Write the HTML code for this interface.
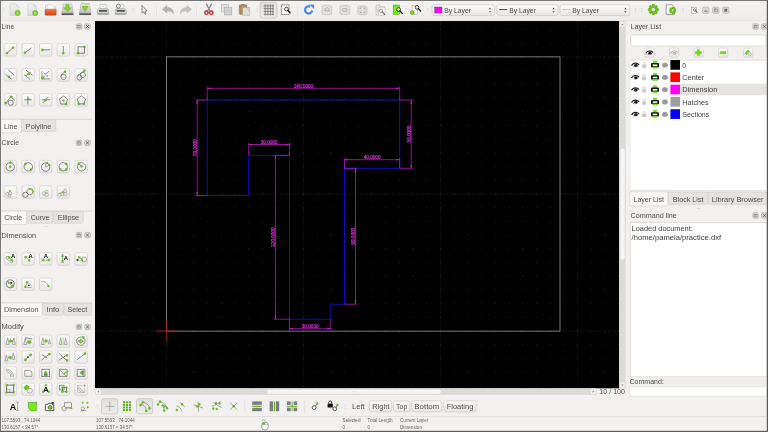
<!DOCTYPE html>
<html lang="en"><head><meta charset="utf-8"><title>LibreCAD - practice.dxf</title>
<style>html,body{margin:0;padding:0;background:#f2f1f0;overflow:hidden}svg{display:block}text{font-family:"Liberation Sans",sans-serif}</style>
</head><body>
<svg width="768" height="432" viewBox="0 0 768 432">
<filter id="soft" filterUnits="userSpaceOnUse" x="-10" y="-10" width="788" height="452"><feGaussianBlur stdDeviation="0.32"/></filter>
<g filter="url(#soft)">
<rect x="-6.00" y="-6.00" width="780.00" height="444.00" fill="#f2f1f0" />
<rect x="95.00" y="21.00" width="524.20" height="367.30" fill="#000" />
<clipPath id="cv"><rect x="95" y="21" width="524.2" height="367.3"/></clipPath>
<g clip-path="url(#cv)">
<path d="M97.65,29.60h0.9M97.65,43.30h0.9M97.65,57.00h0.9M97.65,70.70h0.9M97.65,84.40h0.9M97.65,98.10h0.9M97.65,111.80h0.9M97.65,125.50h0.9M97.65,139.20h0.9M97.65,152.90h0.9M97.65,166.60h0.9M97.65,180.30h0.9M97.65,194.00h0.9M97.65,207.70h0.9M97.65,221.40h0.9M97.65,235.10h0.9M97.65,248.80h0.9M97.65,262.50h0.9M97.65,276.20h0.9M97.65,289.90h0.9M97.65,303.60h0.9M97.65,317.30h0.9M97.65,331.00h0.9M97.65,344.70h0.9M97.65,358.40h0.9M97.65,372.10h0.9M97.65,385.80h0.9M111.35,29.60h0.9M111.35,43.30h0.9M111.35,57.00h0.9M111.35,70.70h0.9M111.35,84.40h0.9M111.35,98.10h0.9M111.35,111.80h0.9M111.35,125.50h0.9M111.35,139.20h0.9M111.35,152.90h0.9M111.35,166.60h0.9M111.35,180.30h0.9M111.35,194.00h0.9M111.35,207.70h0.9M111.35,221.40h0.9M111.35,235.10h0.9M111.35,248.80h0.9M111.35,262.50h0.9M111.35,276.20h0.9M111.35,289.90h0.9M111.35,303.60h0.9M111.35,317.30h0.9M111.35,331.00h0.9M111.35,344.70h0.9M111.35,358.40h0.9M111.35,372.10h0.9M111.35,385.80h0.9M125.05,29.60h0.9M125.05,43.30h0.9M125.05,57.00h0.9M125.05,70.70h0.9M125.05,84.40h0.9M125.05,98.10h0.9M125.05,111.80h0.9M125.05,125.50h0.9M125.05,139.20h0.9M125.05,152.90h0.9M125.05,166.60h0.9M125.05,180.30h0.9M125.05,194.00h0.9M125.05,207.70h0.9M125.05,221.40h0.9M125.05,235.10h0.9M125.05,248.80h0.9M125.05,262.50h0.9M125.05,276.20h0.9M125.05,289.90h0.9M125.05,303.60h0.9M125.05,317.30h0.9M125.05,331.00h0.9M125.05,344.70h0.9M125.05,358.40h0.9M125.05,372.10h0.9M125.05,385.80h0.9M138.75,29.60h0.9M138.75,43.30h0.9M138.75,57.00h0.9M138.75,70.70h0.9M138.75,84.40h0.9M138.75,98.10h0.9M138.75,111.80h0.9M138.75,125.50h0.9M138.75,139.20h0.9M138.75,152.90h0.9M138.75,166.60h0.9M138.75,180.30h0.9M138.75,194.00h0.9M138.75,207.70h0.9M138.75,221.40h0.9M138.75,235.10h0.9M138.75,248.80h0.9M138.75,262.50h0.9M138.75,276.20h0.9M138.75,289.90h0.9M138.75,303.60h0.9M138.75,317.30h0.9M138.75,331.00h0.9M138.75,344.70h0.9M138.75,358.40h0.9M138.75,372.10h0.9M138.75,385.80h0.9M152.45,29.60h0.9M152.45,43.30h0.9M152.45,57.00h0.9M152.45,70.70h0.9M152.45,84.40h0.9M152.45,98.10h0.9M152.45,111.80h0.9M152.45,125.50h0.9M152.45,139.20h0.9M152.45,152.90h0.9M152.45,166.60h0.9M152.45,180.30h0.9M152.45,194.00h0.9M152.45,207.70h0.9M152.45,221.40h0.9M152.45,235.10h0.9M152.45,248.80h0.9M152.45,262.50h0.9M152.45,276.20h0.9M152.45,289.90h0.9M152.45,303.60h0.9M152.45,317.30h0.9M152.45,331.00h0.9M152.45,344.70h0.9M152.45,358.40h0.9M152.45,372.10h0.9M152.45,385.80h0.9M166.15,29.60h0.9M166.15,43.30h0.9M166.15,57.00h0.9M166.15,70.70h0.9M166.15,84.40h0.9M166.15,98.10h0.9M166.15,111.80h0.9M166.15,125.50h0.9M166.15,139.20h0.9M166.15,152.90h0.9M166.15,166.60h0.9M166.15,180.30h0.9M166.15,194.00h0.9M166.15,207.70h0.9M166.15,221.40h0.9M166.15,235.10h0.9M166.15,248.80h0.9M166.15,262.50h0.9M166.15,276.20h0.9M166.15,289.90h0.9M166.15,303.60h0.9M166.15,317.30h0.9M166.15,331.00h0.9M166.15,344.70h0.9M166.15,358.40h0.9M166.15,372.10h0.9M166.15,385.80h0.9M179.85,29.60h0.9M179.85,43.30h0.9M179.85,57.00h0.9M179.85,70.70h0.9M179.85,84.40h0.9M179.85,98.10h0.9M179.85,111.80h0.9M179.85,125.50h0.9M179.85,139.20h0.9M179.85,152.90h0.9M179.85,166.60h0.9M179.85,180.30h0.9M179.85,194.00h0.9M179.85,207.70h0.9M179.85,221.40h0.9M179.85,235.10h0.9M179.85,248.80h0.9M179.85,262.50h0.9M179.85,276.20h0.9M179.85,289.90h0.9M179.85,303.60h0.9M179.85,317.30h0.9M179.85,331.00h0.9M179.85,344.70h0.9M179.85,358.40h0.9M179.85,372.10h0.9M179.85,385.80h0.9M193.55,29.60h0.9M193.55,43.30h0.9M193.55,57.00h0.9M193.55,70.70h0.9M193.55,84.40h0.9M193.55,98.10h0.9M193.55,111.80h0.9M193.55,125.50h0.9M193.55,139.20h0.9M193.55,152.90h0.9M193.55,166.60h0.9M193.55,180.30h0.9M193.55,194.00h0.9M193.55,207.70h0.9M193.55,221.40h0.9M193.55,235.10h0.9M193.55,248.80h0.9M193.55,262.50h0.9M193.55,276.20h0.9M193.55,289.90h0.9M193.55,303.60h0.9M193.55,317.30h0.9M193.55,331.00h0.9M193.55,344.70h0.9M193.55,358.40h0.9M193.55,372.10h0.9M193.55,385.80h0.9M207.25,29.60h0.9M207.25,43.30h0.9M207.25,57.00h0.9M207.25,70.70h0.9M207.25,84.40h0.9M207.25,98.10h0.9M207.25,111.80h0.9M207.25,125.50h0.9M207.25,139.20h0.9M207.25,152.90h0.9M207.25,166.60h0.9M207.25,180.30h0.9M207.25,194.00h0.9M207.25,207.70h0.9M207.25,221.40h0.9M207.25,235.10h0.9M207.25,248.80h0.9M207.25,262.50h0.9M207.25,276.20h0.9M207.25,289.90h0.9M207.25,303.60h0.9M207.25,317.30h0.9M207.25,331.00h0.9M207.25,344.70h0.9M207.25,358.40h0.9M207.25,372.10h0.9M207.25,385.80h0.9M220.95,29.60h0.9M220.95,43.30h0.9M220.95,57.00h0.9M220.95,70.70h0.9M220.95,84.40h0.9M220.95,98.10h0.9M220.95,111.80h0.9M220.95,125.50h0.9M220.95,139.20h0.9M220.95,152.90h0.9M220.95,166.60h0.9M220.95,180.30h0.9M220.95,194.00h0.9M220.95,207.70h0.9M220.95,221.40h0.9M220.95,235.10h0.9M220.95,248.80h0.9M220.95,262.50h0.9M220.95,276.20h0.9M220.95,289.90h0.9M220.95,303.60h0.9M220.95,317.30h0.9M220.95,331.00h0.9M220.95,344.70h0.9M220.95,358.40h0.9M220.95,372.10h0.9M220.95,385.80h0.9M234.65,29.60h0.9M234.65,43.30h0.9M234.65,57.00h0.9M234.65,70.70h0.9M234.65,84.40h0.9M234.65,98.10h0.9M234.65,111.80h0.9M234.65,125.50h0.9M234.65,139.20h0.9M234.65,152.90h0.9M234.65,166.60h0.9M234.65,180.30h0.9M234.65,194.00h0.9M234.65,207.70h0.9M234.65,221.40h0.9M234.65,235.10h0.9M234.65,248.80h0.9M234.65,262.50h0.9M234.65,276.20h0.9M234.65,289.90h0.9M234.65,303.60h0.9M234.65,317.30h0.9M234.65,331.00h0.9M234.65,344.70h0.9M234.65,358.40h0.9M234.65,372.10h0.9M234.65,385.80h0.9M248.35,29.60h0.9M248.35,43.30h0.9M248.35,57.00h0.9M248.35,70.70h0.9M248.35,84.40h0.9M248.35,98.10h0.9M248.35,111.80h0.9M248.35,125.50h0.9M248.35,139.20h0.9M248.35,152.90h0.9M248.35,166.60h0.9M248.35,180.30h0.9M248.35,194.00h0.9M248.35,207.70h0.9M248.35,221.40h0.9M248.35,235.10h0.9M248.35,248.80h0.9M248.35,262.50h0.9M248.35,276.20h0.9M248.35,289.90h0.9M248.35,303.60h0.9M248.35,317.30h0.9M248.35,331.00h0.9M248.35,344.70h0.9M248.35,358.40h0.9M248.35,372.10h0.9M248.35,385.80h0.9M262.05,29.60h0.9M262.05,43.30h0.9M262.05,57.00h0.9M262.05,70.70h0.9M262.05,84.40h0.9M262.05,98.10h0.9M262.05,111.80h0.9M262.05,125.50h0.9M262.05,139.20h0.9M262.05,152.90h0.9M262.05,166.60h0.9M262.05,180.30h0.9M262.05,194.00h0.9M262.05,207.70h0.9M262.05,221.40h0.9M262.05,235.10h0.9M262.05,248.80h0.9M262.05,262.50h0.9M262.05,276.20h0.9M262.05,289.90h0.9M262.05,303.60h0.9M262.05,317.30h0.9M262.05,331.00h0.9M262.05,344.70h0.9M262.05,358.40h0.9M262.05,372.10h0.9M262.05,385.80h0.9M275.75,29.60h0.9M275.75,43.30h0.9M275.75,57.00h0.9M275.75,70.70h0.9M275.75,84.40h0.9M275.75,98.10h0.9M275.75,111.80h0.9M275.75,125.50h0.9M275.75,139.20h0.9M275.75,152.90h0.9M275.75,166.60h0.9M275.75,180.30h0.9M275.75,194.00h0.9M275.75,207.70h0.9M275.75,221.40h0.9M275.75,235.10h0.9M275.75,248.80h0.9M275.75,262.50h0.9M275.75,276.20h0.9M275.75,289.90h0.9M275.75,303.60h0.9M275.75,317.30h0.9M275.75,331.00h0.9M275.75,344.70h0.9M275.75,358.40h0.9M275.75,372.10h0.9M275.75,385.80h0.9M289.45,29.60h0.9M289.45,43.30h0.9M289.45,57.00h0.9M289.45,70.70h0.9M289.45,84.40h0.9M289.45,98.10h0.9M289.45,111.80h0.9M289.45,125.50h0.9M289.45,139.20h0.9M289.45,152.90h0.9M289.45,166.60h0.9M289.45,180.30h0.9M289.45,194.00h0.9M289.45,207.70h0.9M289.45,221.40h0.9M289.45,235.10h0.9M289.45,248.80h0.9M289.45,262.50h0.9M289.45,276.20h0.9M289.45,289.90h0.9M289.45,303.60h0.9M289.45,317.30h0.9M289.45,331.00h0.9M289.45,344.70h0.9M289.45,358.40h0.9M289.45,372.10h0.9M289.45,385.80h0.9M303.15,29.60h0.9M303.15,43.30h0.9M303.15,57.00h0.9M303.15,70.70h0.9M303.15,84.40h0.9M303.15,98.10h0.9M303.15,111.80h0.9M303.15,125.50h0.9M303.15,139.20h0.9M303.15,152.90h0.9M303.15,166.60h0.9M303.15,180.30h0.9M303.15,194.00h0.9M303.15,207.70h0.9M303.15,221.40h0.9M303.15,235.10h0.9M303.15,248.80h0.9M303.15,262.50h0.9M303.15,276.20h0.9M303.15,289.90h0.9M303.15,303.60h0.9M303.15,317.30h0.9M303.15,331.00h0.9M303.15,344.70h0.9M303.15,358.40h0.9M303.15,372.10h0.9M303.15,385.80h0.9M316.85,29.60h0.9M316.85,43.30h0.9M316.85,57.00h0.9M316.85,70.70h0.9M316.85,84.40h0.9M316.85,98.10h0.9M316.85,111.80h0.9M316.85,125.50h0.9M316.85,139.20h0.9M316.85,152.90h0.9M316.85,166.60h0.9M316.85,180.30h0.9M316.85,194.00h0.9M316.85,207.70h0.9M316.85,221.40h0.9M316.85,235.10h0.9M316.85,248.80h0.9M316.85,262.50h0.9M316.85,276.20h0.9M316.85,289.90h0.9M316.85,303.60h0.9M316.85,317.30h0.9M316.85,331.00h0.9M316.85,344.70h0.9M316.85,358.40h0.9M316.85,372.10h0.9M316.85,385.80h0.9M330.55,29.60h0.9M330.55,43.30h0.9M330.55,57.00h0.9M330.55,70.70h0.9M330.55,84.40h0.9M330.55,98.10h0.9M330.55,111.80h0.9M330.55,125.50h0.9M330.55,139.20h0.9M330.55,152.90h0.9M330.55,166.60h0.9M330.55,180.30h0.9M330.55,194.00h0.9M330.55,207.70h0.9M330.55,221.40h0.9M330.55,235.10h0.9M330.55,248.80h0.9M330.55,262.50h0.9M330.55,276.20h0.9M330.55,289.90h0.9M330.55,303.60h0.9M330.55,317.30h0.9M330.55,331.00h0.9M330.55,344.70h0.9M330.55,358.40h0.9M330.55,372.10h0.9M330.55,385.80h0.9M344.25,29.60h0.9M344.25,43.30h0.9M344.25,57.00h0.9M344.25,70.70h0.9M344.25,84.40h0.9M344.25,98.10h0.9M344.25,111.80h0.9M344.25,125.50h0.9M344.25,139.20h0.9M344.25,152.90h0.9M344.25,166.60h0.9M344.25,180.30h0.9M344.25,194.00h0.9M344.25,207.70h0.9M344.25,221.40h0.9M344.25,235.10h0.9M344.25,248.80h0.9M344.25,262.50h0.9M344.25,276.20h0.9M344.25,289.90h0.9M344.25,303.60h0.9M344.25,317.30h0.9M344.25,331.00h0.9M344.25,344.70h0.9M344.25,358.40h0.9M344.25,372.10h0.9M344.25,385.80h0.9M357.95,29.60h0.9M357.95,43.30h0.9M357.95,57.00h0.9M357.95,70.70h0.9M357.95,84.40h0.9M357.95,98.10h0.9M357.95,111.80h0.9M357.95,125.50h0.9M357.95,139.20h0.9M357.95,152.90h0.9M357.95,166.60h0.9M357.95,180.30h0.9M357.95,194.00h0.9M357.95,207.70h0.9M357.95,221.40h0.9M357.95,235.10h0.9M357.95,248.80h0.9M357.95,262.50h0.9M357.95,276.20h0.9M357.95,289.90h0.9M357.95,303.60h0.9M357.95,317.30h0.9M357.95,331.00h0.9M357.95,344.70h0.9M357.95,358.40h0.9M357.95,372.10h0.9M357.95,385.80h0.9M371.65,29.60h0.9M371.65,43.30h0.9M371.65,57.00h0.9M371.65,70.70h0.9M371.65,84.40h0.9M371.65,98.10h0.9M371.65,111.80h0.9M371.65,125.50h0.9M371.65,139.20h0.9M371.65,152.90h0.9M371.65,166.60h0.9M371.65,180.30h0.9M371.65,194.00h0.9M371.65,207.70h0.9M371.65,221.40h0.9M371.65,235.10h0.9M371.65,248.80h0.9M371.65,262.50h0.9M371.65,276.20h0.9M371.65,289.90h0.9M371.65,303.60h0.9M371.65,317.30h0.9M371.65,331.00h0.9M371.65,344.70h0.9M371.65,358.40h0.9M371.65,372.10h0.9M371.65,385.80h0.9M385.35,29.60h0.9M385.35,43.30h0.9M385.35,57.00h0.9M385.35,70.70h0.9M385.35,84.40h0.9M385.35,98.10h0.9M385.35,111.80h0.9M385.35,125.50h0.9M385.35,139.20h0.9M385.35,152.90h0.9M385.35,166.60h0.9M385.35,180.30h0.9M385.35,194.00h0.9M385.35,207.70h0.9M385.35,221.40h0.9M385.35,235.10h0.9M385.35,248.80h0.9M385.35,262.50h0.9M385.35,276.20h0.9M385.35,289.90h0.9M385.35,303.60h0.9M385.35,317.30h0.9M385.35,331.00h0.9M385.35,344.70h0.9M385.35,358.40h0.9M385.35,372.10h0.9M385.35,385.80h0.9M399.05,29.60h0.9M399.05,43.30h0.9M399.05,57.00h0.9M399.05,70.70h0.9M399.05,84.40h0.9M399.05,98.10h0.9M399.05,111.80h0.9M399.05,125.50h0.9M399.05,139.20h0.9M399.05,152.90h0.9M399.05,166.60h0.9M399.05,180.30h0.9M399.05,194.00h0.9M399.05,207.70h0.9M399.05,221.40h0.9M399.05,235.10h0.9M399.05,248.80h0.9M399.05,262.50h0.9M399.05,276.20h0.9M399.05,289.90h0.9M399.05,303.60h0.9M399.05,317.30h0.9M399.05,331.00h0.9M399.05,344.70h0.9M399.05,358.40h0.9M399.05,372.10h0.9M399.05,385.80h0.9M412.75,29.60h0.9M412.75,43.30h0.9M412.75,57.00h0.9M412.75,70.70h0.9M412.75,84.40h0.9M412.75,98.10h0.9M412.75,111.80h0.9M412.75,125.50h0.9M412.75,139.20h0.9M412.75,152.90h0.9M412.75,166.60h0.9M412.75,180.30h0.9M412.75,194.00h0.9M412.75,207.70h0.9M412.75,221.40h0.9M412.75,235.10h0.9M412.75,248.80h0.9M412.75,262.50h0.9M412.75,276.20h0.9M412.75,289.90h0.9M412.75,303.60h0.9M412.75,317.30h0.9M412.75,331.00h0.9M412.75,344.70h0.9M412.75,358.40h0.9M412.75,372.10h0.9M412.75,385.80h0.9M426.45,29.60h0.9M426.45,43.30h0.9M426.45,57.00h0.9M426.45,70.70h0.9M426.45,84.40h0.9M426.45,98.10h0.9M426.45,111.80h0.9M426.45,125.50h0.9M426.45,139.20h0.9M426.45,152.90h0.9M426.45,166.60h0.9M426.45,180.30h0.9M426.45,194.00h0.9M426.45,207.70h0.9M426.45,221.40h0.9M426.45,235.10h0.9M426.45,248.80h0.9M426.45,262.50h0.9M426.45,276.20h0.9M426.45,289.90h0.9M426.45,303.60h0.9M426.45,317.30h0.9M426.45,331.00h0.9M426.45,344.70h0.9M426.45,358.40h0.9M426.45,372.10h0.9M426.45,385.80h0.9M440.15,29.60h0.9M440.15,43.30h0.9M440.15,57.00h0.9M440.15,70.70h0.9M440.15,84.40h0.9M440.15,98.10h0.9M440.15,111.80h0.9M440.15,125.50h0.9M440.15,139.20h0.9M440.15,152.90h0.9M440.15,166.60h0.9M440.15,180.30h0.9M440.15,194.00h0.9M440.15,207.70h0.9M440.15,221.40h0.9M440.15,235.10h0.9M440.15,248.80h0.9M440.15,262.50h0.9M440.15,276.20h0.9M440.15,289.90h0.9M440.15,303.60h0.9M440.15,317.30h0.9M440.15,331.00h0.9M440.15,344.70h0.9M440.15,358.40h0.9M440.15,372.10h0.9M440.15,385.80h0.9M453.85,29.60h0.9M453.85,43.30h0.9M453.85,57.00h0.9M453.85,70.70h0.9M453.85,84.40h0.9M453.85,98.10h0.9M453.85,111.80h0.9M453.85,125.50h0.9M453.85,139.20h0.9M453.85,152.90h0.9M453.85,166.60h0.9M453.85,180.30h0.9M453.85,194.00h0.9M453.85,207.70h0.9M453.85,221.40h0.9M453.85,235.10h0.9M453.85,248.80h0.9M453.85,262.50h0.9M453.85,276.20h0.9M453.85,289.90h0.9M453.85,303.60h0.9M453.85,317.30h0.9M453.85,331.00h0.9M453.85,344.70h0.9M453.85,358.40h0.9M453.85,372.10h0.9M453.85,385.80h0.9M467.55,29.60h0.9M467.55,43.30h0.9M467.55,57.00h0.9M467.55,70.70h0.9M467.55,84.40h0.9M467.55,98.10h0.9M467.55,111.80h0.9M467.55,125.50h0.9M467.55,139.20h0.9M467.55,152.90h0.9M467.55,166.60h0.9M467.55,180.30h0.9M467.55,194.00h0.9M467.55,207.70h0.9M467.55,221.40h0.9M467.55,235.10h0.9M467.55,248.80h0.9M467.55,262.50h0.9M467.55,276.20h0.9M467.55,289.90h0.9M467.55,303.60h0.9M467.55,317.30h0.9M467.55,331.00h0.9M467.55,344.70h0.9M467.55,358.40h0.9M467.55,372.10h0.9M467.55,385.80h0.9M481.25,29.60h0.9M481.25,43.30h0.9M481.25,57.00h0.9M481.25,70.70h0.9M481.25,84.40h0.9M481.25,98.10h0.9M481.25,111.80h0.9M481.25,125.50h0.9M481.25,139.20h0.9M481.25,152.90h0.9M481.25,166.60h0.9M481.25,180.30h0.9M481.25,194.00h0.9M481.25,207.70h0.9M481.25,221.40h0.9M481.25,235.10h0.9M481.25,248.80h0.9M481.25,262.50h0.9M481.25,276.20h0.9M481.25,289.90h0.9M481.25,303.60h0.9M481.25,317.30h0.9M481.25,331.00h0.9M481.25,344.70h0.9M481.25,358.40h0.9M481.25,372.10h0.9M481.25,385.80h0.9M494.95,29.60h0.9M494.95,43.30h0.9M494.95,57.00h0.9M494.95,70.70h0.9M494.95,84.40h0.9M494.95,98.10h0.9M494.95,111.80h0.9M494.95,125.50h0.9M494.95,139.20h0.9M494.95,152.90h0.9M494.95,166.60h0.9M494.95,180.30h0.9M494.95,194.00h0.9M494.95,207.70h0.9M494.95,221.40h0.9M494.95,235.10h0.9M494.95,248.80h0.9M494.95,262.50h0.9M494.95,276.20h0.9M494.95,289.90h0.9M494.95,303.60h0.9M494.95,317.30h0.9M494.95,331.00h0.9M494.95,344.70h0.9M494.95,358.40h0.9M494.95,372.10h0.9M494.95,385.80h0.9M508.65,29.60h0.9M508.65,43.30h0.9M508.65,57.00h0.9M508.65,70.70h0.9M508.65,84.40h0.9M508.65,98.10h0.9M508.65,111.80h0.9M508.65,125.50h0.9M508.65,139.20h0.9M508.65,152.90h0.9M508.65,166.60h0.9M508.65,180.30h0.9M508.65,194.00h0.9M508.65,207.70h0.9M508.65,221.40h0.9M508.65,235.10h0.9M508.65,248.80h0.9M508.65,262.50h0.9M508.65,276.20h0.9M508.65,289.90h0.9M508.65,303.60h0.9M508.65,317.30h0.9M508.65,331.00h0.9M508.65,344.70h0.9M508.65,358.40h0.9M508.65,372.10h0.9M508.65,385.80h0.9M522.35,29.60h0.9M522.35,43.30h0.9M522.35,57.00h0.9M522.35,70.70h0.9M522.35,84.40h0.9M522.35,98.10h0.9M522.35,111.80h0.9M522.35,125.50h0.9M522.35,139.20h0.9M522.35,152.90h0.9M522.35,166.60h0.9M522.35,180.30h0.9M522.35,194.00h0.9M522.35,207.70h0.9M522.35,221.40h0.9M522.35,235.10h0.9M522.35,248.80h0.9M522.35,262.50h0.9M522.35,276.20h0.9M522.35,289.90h0.9M522.35,303.60h0.9M522.35,317.30h0.9M522.35,331.00h0.9M522.35,344.70h0.9M522.35,358.40h0.9M522.35,372.10h0.9M522.35,385.80h0.9M536.05,29.60h0.9M536.05,43.30h0.9M536.05,57.00h0.9M536.05,70.70h0.9M536.05,84.40h0.9M536.05,98.10h0.9M536.05,111.80h0.9M536.05,125.50h0.9M536.05,139.20h0.9M536.05,152.90h0.9M536.05,166.60h0.9M536.05,180.30h0.9M536.05,194.00h0.9M536.05,207.70h0.9M536.05,221.40h0.9M536.05,235.10h0.9M536.05,248.80h0.9M536.05,262.50h0.9M536.05,276.20h0.9M536.05,289.90h0.9M536.05,303.60h0.9M536.05,317.30h0.9M536.05,331.00h0.9M536.05,344.70h0.9M536.05,358.40h0.9M536.05,372.10h0.9M536.05,385.80h0.9M549.75,29.60h0.9M549.75,43.30h0.9M549.75,57.00h0.9M549.75,70.70h0.9M549.75,84.40h0.9M549.75,98.10h0.9M549.75,111.80h0.9M549.75,125.50h0.9M549.75,139.20h0.9M549.75,152.90h0.9M549.75,166.60h0.9M549.75,180.30h0.9M549.75,194.00h0.9M549.75,207.70h0.9M549.75,221.40h0.9M549.75,235.10h0.9M549.75,248.80h0.9M549.75,262.50h0.9M549.75,276.20h0.9M549.75,289.90h0.9M549.75,303.60h0.9M549.75,317.30h0.9M549.75,331.00h0.9M549.75,344.70h0.9M549.75,358.40h0.9M549.75,372.10h0.9M549.75,385.80h0.9M563.45,29.60h0.9M563.45,43.30h0.9M563.45,57.00h0.9M563.45,70.70h0.9M563.45,84.40h0.9M563.45,98.10h0.9M563.45,111.80h0.9M563.45,125.50h0.9M563.45,139.20h0.9M563.45,152.90h0.9M563.45,166.60h0.9M563.45,180.30h0.9M563.45,194.00h0.9M563.45,207.70h0.9M563.45,221.40h0.9M563.45,235.10h0.9M563.45,248.80h0.9M563.45,262.50h0.9M563.45,276.20h0.9M563.45,289.90h0.9M563.45,303.60h0.9M563.45,317.30h0.9M563.45,331.00h0.9M563.45,344.70h0.9M563.45,358.40h0.9M563.45,372.10h0.9M563.45,385.80h0.9M577.15,29.60h0.9M577.15,43.30h0.9M577.15,57.00h0.9M577.15,70.70h0.9M577.15,84.40h0.9M577.15,98.10h0.9M577.15,111.80h0.9M577.15,125.50h0.9M577.15,139.20h0.9M577.15,152.90h0.9M577.15,166.60h0.9M577.15,180.30h0.9M577.15,194.00h0.9M577.15,207.70h0.9M577.15,221.40h0.9M577.15,235.10h0.9M577.15,248.80h0.9M577.15,262.50h0.9M577.15,276.20h0.9M577.15,289.90h0.9M577.15,303.60h0.9M577.15,317.30h0.9M577.15,331.00h0.9M577.15,344.70h0.9M577.15,358.40h0.9M577.15,372.10h0.9M577.15,385.80h0.9M590.85,29.60h0.9M590.85,43.30h0.9M590.85,57.00h0.9M590.85,70.70h0.9M590.85,84.40h0.9M590.85,98.10h0.9M590.85,111.80h0.9M590.85,125.50h0.9M590.85,139.20h0.9M590.85,152.90h0.9M590.85,166.60h0.9M590.85,180.30h0.9M590.85,194.00h0.9M590.85,207.70h0.9M590.85,221.40h0.9M590.85,235.10h0.9M590.85,248.80h0.9M590.85,262.50h0.9M590.85,276.20h0.9M590.85,289.90h0.9M590.85,303.60h0.9M590.85,317.30h0.9M590.85,331.00h0.9M590.85,344.70h0.9M590.85,358.40h0.9M590.85,372.10h0.9M590.85,385.80h0.9M604.55,29.60h0.9M604.55,43.30h0.9M604.55,57.00h0.9M604.55,70.70h0.9M604.55,84.40h0.9M604.55,98.10h0.9M604.55,111.80h0.9M604.55,125.50h0.9M604.55,139.20h0.9M604.55,152.90h0.9M604.55,166.60h0.9M604.55,180.30h0.9M604.55,194.00h0.9M604.55,207.70h0.9M604.55,221.40h0.9M604.55,235.10h0.9M604.55,248.80h0.9M604.55,262.50h0.9M604.55,276.20h0.9M604.55,289.90h0.9M604.55,303.60h0.9M604.55,317.30h0.9M604.55,331.00h0.9M604.55,344.70h0.9M604.55,358.40h0.9M604.55,372.10h0.9M604.55,385.80h0.9M618.25,29.60h0.9M618.25,43.30h0.9M618.25,57.00h0.9M618.25,70.70h0.9M618.25,84.40h0.9M618.25,98.10h0.9M618.25,111.80h0.9M618.25,125.50h0.9M618.25,139.20h0.9M618.25,152.90h0.9M618.25,166.60h0.9M618.25,180.30h0.9M618.25,194.00h0.9M618.25,207.70h0.9M618.25,221.40h0.9M618.25,235.10h0.9M618.25,248.80h0.9M618.25,262.50h0.9M618.25,276.20h0.9M618.25,289.90h0.9M618.25,303.60h0.9M618.25,317.30h0.9M618.25,331.00h0.9M618.25,344.70h0.9M618.25,358.40h0.9M618.25,372.10h0.9M618.25,385.80h0.9" stroke="#303030" stroke-width="0.9" fill="none"/>
<line x1="166.60" y1="21.00" x2="166.60" y2="388.30" stroke="#333333" stroke-width="0.55" stroke-dasharray="0.6 1.1"/>
<line x1="303.60" y1="21.00" x2="303.60" y2="388.30" stroke="#333333" stroke-width="0.55" stroke-dasharray="0.6 1.1"/>
<line x1="440.60" y1="21.00" x2="440.60" y2="388.30" stroke="#333333" stroke-width="0.55" stroke-dasharray="0.6 1.1"/>
<line x1="577.60" y1="21.00" x2="577.60" y2="388.30" stroke="#333333" stroke-width="0.55" stroke-dasharray="0.6 1.1"/>
<line x1="95.00" y1="331.00" x2="619.20" y2="331.00" stroke="#333333" stroke-width="0.55" stroke-dasharray="0.6 1.1"/>
<line x1="95.00" y1="194.00" x2="619.20" y2="194.00" stroke="#333333" stroke-width="0.55" stroke-dasharray="0.6 1.1"/>
<line x1="95.00" y1="57.00" x2="619.20" y2="57.00" stroke="#333333" stroke-width="0.55" stroke-dasharray="0.6 1.1"/>
<rect x="166.6" y="56.9" width="393.40" height="274.20" fill="none" stroke="#c0c0c0" stroke-width="0.62"/>
<line x1="156.00" y1="331.00" x2="177.00" y2="331.00" stroke="#c01414" stroke-width="0.8" />
<line x1="166.60" y1="320.50" x2="166.60" y2="341.50" stroke="#c01414" stroke-width="0.8" />
<path d="M207.2,100H399.7V168.3H344.5V304.2H330.8V319.2H289.5V155.3H248.7V195.5H207.2Z" fill="none" stroke="#1414d8" stroke-width="0.85"/>
<line x1="207.20" y1="100.00" x2="207.20" y2="86.60" stroke="#d020d0" stroke-width="0.7" />
<line x1="399.70" y1="100.00" x2="399.70" y2="86.60" stroke="#d020d0" stroke-width="0.7" />
<line x1="207.20" y1="88.30" x2="399.70" y2="88.30" stroke="#d020d0" stroke-width="0.7" />
<path d="M207.20,88.30L210.60,87.45L210.60,89.15Z" fill="#d020d0"/>
<path d="M399.70,88.30L396.30,89.15L396.30,87.45Z" fill="#d020d0"/>
<text x="293.70" y="87.75" font-size="5.5" fill="#f030f0" stroke="#f030f0" stroke-width="0.18" textLength="19.5" lengthAdjust="spacingAndGlyphs">140.0000</text>
<line x1="248.70" y1="155.30" x2="248.70" y2="142.80" stroke="#d020d0" stroke-width="0.7" />
<line x1="289.50" y1="155.30" x2="289.50" y2="142.80" stroke="#d020d0" stroke-width="0.7" />
<line x1="248.70" y1="144.50" x2="289.50" y2="144.50" stroke="#d020d0" stroke-width="0.7" />
<path d="M248.70,144.50L252.10,143.65L252.10,145.35Z" fill="#d020d0"/>
<path d="M289.50,144.50L286.10,145.35L286.10,143.65Z" fill="#d020d0"/>
<text x="260.65" y="143.95" font-size="5.5" fill="#f030f0" stroke="#f030f0" stroke-width="0.18" textLength="16.9" lengthAdjust="spacingAndGlyphs">30.0000</text>
<line x1="344.50" y1="168.30" x2="344.50" y2="158.00" stroke="#d020d0" stroke-width="0.7" />
<line x1="399.70" y1="168.30" x2="399.70" y2="158.00" stroke="#d020d0" stroke-width="0.7" />
<line x1="344.50" y1="159.70" x2="399.70" y2="159.70" stroke="#d020d0" stroke-width="0.7" />
<path d="M344.50,159.70L347.90,158.85L347.90,160.55Z" fill="#d020d0"/>
<path d="M399.70,159.70L396.30,160.55L396.30,158.85Z" fill="#d020d0"/>
<text x="363.65" y="159.15" font-size="5.5" fill="#f030f0" stroke="#f030f0" stroke-width="0.18" textLength="16.9" lengthAdjust="spacingAndGlyphs">40.0000</text>
<line x1="289.50" y1="319.20" x2="289.50" y2="330.40" stroke="#d020d0" stroke-width="0.7" />
<line x1="330.80" y1="319.20" x2="330.80" y2="330.40" stroke="#d020d0" stroke-width="0.7" />
<line x1="289.50" y1="328.70" x2="330.80" y2="328.70" stroke="#d020d0" stroke-width="0.7" />
<path d="M289.50,328.70L292.90,327.85L292.90,329.55Z" fill="#d020d0"/>
<path d="M330.80,328.70L327.40,329.55L327.40,327.85Z" fill="#d020d0"/>
<text x="301.70" y="328.15" font-size="5.5" fill="#f030f0" stroke="#f030f0" stroke-width="0.18" textLength="16.9" lengthAdjust="spacingAndGlyphs">30.0000</text>
<line x1="207.20" y1="100.00" x2="195.50" y2="100.00" stroke="#d020d0" stroke-width="0.7" />
<line x1="207.20" y1="195.50" x2="195.50" y2="195.50" stroke="#d020d0" stroke-width="0.7" />
<line x1="197.20" y1="100.00" x2="197.20" y2="195.50" stroke="#d020d0" stroke-width="0.7" />
<path d="M197.20,100.00L198.05,103.40L196.35,103.40Z" fill="#d020d0"/>
<path d="M197.20,195.50L196.35,192.10L198.05,192.10Z" fill="#d020d0"/>
<text transform="translate(196.65,156.20) rotate(-90)" font-size="5.5" fill="#f030f0" stroke="#f030f0" stroke-width="0.18" textLength="16.9" lengthAdjust="spacingAndGlyphs">70.0000</text>
<line x1="289.50" y1="155.30" x2="273.70" y2="155.30" stroke="#d020d0" stroke-width="0.7" />
<line x1="289.50" y1="319.20" x2="273.70" y2="319.20" stroke="#d020d0" stroke-width="0.7" />
<line x1="275.40" y1="155.30" x2="275.40" y2="319.20" stroke="#d020d0" stroke-width="0.7" />
<path d="M275.40,155.30L276.25,158.70L274.55,158.70Z" fill="#d020d0"/>
<path d="M275.40,319.20L274.55,315.80L276.25,315.80Z" fill="#d020d0"/>
<text transform="translate(274.85,247.00) rotate(-90)" font-size="5.5" fill="#f030f0" stroke="#f030f0" stroke-width="0.18" textLength="19.5" lengthAdjust="spacingAndGlyphs">120.0000</text>
<line x1="344.50" y1="168.30" x2="357.20" y2="168.30" stroke="#d020d0" stroke-width="0.7" />
<line x1="344.50" y1="304.20" x2="357.20" y2="304.20" stroke="#d020d0" stroke-width="0.7" />
<line x1="355.50" y1="168.30" x2="355.50" y2="304.20" stroke="#d020d0" stroke-width="0.7" />
<path d="M355.50,168.30L356.35,171.70L354.65,171.70Z" fill="#d020d0"/>
<path d="M355.50,304.20L354.65,300.80L356.35,300.80Z" fill="#d020d0"/>
<text transform="translate(354.95,244.70) rotate(-90)" font-size="5.5" fill="#f030f0" stroke="#f030f0" stroke-width="0.18" textLength="16.9" lengthAdjust="spacingAndGlyphs">99.0000</text>
<line x1="399.70" y1="100.00" x2="412.90" y2="100.00" stroke="#d020d0" stroke-width="0.7" />
<line x1="399.70" y1="168.30" x2="412.90" y2="168.30" stroke="#d020d0" stroke-width="0.7" />
<line x1="411.20" y1="100.00" x2="411.20" y2="168.30" stroke="#d020d0" stroke-width="0.7" />
<path d="M411.20,100.00L412.05,103.40L410.35,103.40Z" fill="#d020d0"/>
<path d="M411.20,168.30L410.35,164.90L412.05,164.90Z" fill="#d020d0"/>
<text transform="translate(410.65,142.60) rotate(-90)" font-size="5.5" fill="#f030f0" stroke="#f030f0" stroke-width="0.18" textLength="16.9" lengthAdjust="spacingAndGlyphs">50.0000</text>
</g>
<defs>
<linearGradient id="btn" x1="0" y1="0" x2="0" y2="1"><stop offset="0" stop-color="#fdfdfd"/><stop offset="1" stop-color="#e9e8e6"/></linearGradient>
<linearGradient id="btnp" x1="0" y1="0" x2="0" y2="1"><stop offset="0" stop-color="#e2e0dd"/><stop offset="1" stop-color="#eeedeb"/></linearGradient>
<linearGradient id="tbar" x1="0" y1="0" x2="0" y2="1"><stop offset="0" stop-color="#f4f3f2"/><stop offset="1" stop-color="#eeedeb"/></linearGradient>
</defs>
<rect x="0.00" y="1.00" width="768.00" height="19.80" fill="url(#tbar)" />
<line x1="0.00" y1="20.60" x2="768.00" y2="20.60" stroke="#e0deda" stroke-width="0.6" />
<rect x="0.80" y="21.00" width="93.20" height="396.00" fill="#f2f1f0" />
<text x="1.60" y="29.00" font-size="6.8" fill="#4f4f4f"  textLength="12.50" lengthAdjust="spacingAndGlyphs">Line</text>
<rect x="76.20" y="23.80" width="5.60" height="5.40" rx="1.2" ry="1.2" fill="#d8d6d3" stroke="#a3a09b" stroke-width="0.5" />
<rect x="84.70" y="23.80" width="5.60" height="5.40" rx="1.2" ry="1.2" fill="#d8d6d3" stroke="#a3a09b" stroke-width="0.5" />
<path d="M77.70,25.40h2.6v2.4h-2.6z M78.80,25.00v1.6" fill="none" stroke="#6a6864" stroke-width="0.5"/>
<path d="M86.20,25.20l2.6,2.6 M88.80,25.20l-2.6,2.6" fill="none" stroke="#55534f" stroke-width="0.8"/>
<rect x="4.30" y="43.60" width="12.40" height="12.50" rx="1.8" ry="1.8" fill="url(#btn)" stroke="#cbc8c3" stroke-width="0.6" />
<rect x="21.90" y="43.60" width="12.40" height="12.50" rx="1.8" ry="1.8" fill="url(#btn)" stroke="#cbc8c3" stroke-width="0.6" />
<rect x="39.50" y="43.60" width="12.40" height="12.50" rx="1.8" ry="1.8" fill="url(#btn)" stroke="#cbc8c3" stroke-width="0.6" />
<rect x="57.10" y="43.60" width="12.40" height="12.50" rx="1.8" ry="1.8" fill="url(#btn)" stroke="#cbc8c3" stroke-width="0.6" />
<rect x="74.90" y="43.60" width="12.40" height="12.50" rx="1.8" ry="1.8" fill="url(#btn)" stroke="#cbc8c3" stroke-width="0.6" />
<rect x="4.30" y="68.70" width="12.40" height="12.50" rx="1.8" ry="1.8" fill="url(#btn)" stroke="#cbc8c3" stroke-width="0.6" />
<rect x="21.90" y="68.70" width="12.40" height="12.50" rx="1.8" ry="1.8" fill="url(#btn)" stroke="#cbc8c3" stroke-width="0.6" />
<rect x="39.50" y="68.70" width="12.40" height="12.50" rx="1.8" ry="1.8" fill="url(#btn)" stroke="#cbc8c3" stroke-width="0.6" />
<rect x="57.10" y="68.70" width="12.40" height="12.50" rx="1.8" ry="1.8" fill="url(#btn)" stroke="#cbc8c3" stroke-width="0.6" />
<rect x="74.90" y="68.70" width="12.40" height="12.50" rx="1.8" ry="1.8" fill="url(#btn)" stroke="#cbc8c3" stroke-width="0.6" />
<rect x="4.30" y="93.60" width="12.40" height="12.50" rx="1.8" ry="1.8" fill="url(#btn)" stroke="#cbc8c3" stroke-width="0.6" />
<rect x="21.90" y="93.60" width="12.40" height="12.50" rx="1.8" ry="1.8" fill="url(#btn)" stroke="#cbc8c3" stroke-width="0.6" />
<rect x="39.50" y="93.60" width="12.40" height="12.50" rx="1.8" ry="1.8" fill="url(#btn)" stroke="#cbc8c3" stroke-width="0.6" />
<rect x="57.10" y="93.60" width="12.40" height="12.50" rx="1.8" ry="1.8" fill="url(#btn)" stroke="#cbc8c3" stroke-width="0.6" />
<rect x="74.90" y="93.60" width="12.40" height="12.50" rx="1.8" ry="1.8" fill="url(#btn)" stroke="#cbc8c3" stroke-width="0.6" />
<line x1="1.00" y1="119.30" x2="92.50" y2="119.30" stroke="#cfccc7" stroke-width="0.7" />
<path d="M1.00,119.30V131.30Q1.00,132.90 2.60,132.90H19.70Q21.30,132.90 21.30,131.30V119.30Z" fill="#faf9f8" stroke="#d2cfca" stroke-width="0.6"/>
<text x="4.10" y="128.60" font-size="6.8" fill="#4f4f4f"  textLength="13.40" lengthAdjust="spacingAndGlyphs">Line</text>
<path d="M21.60,119.60V129.90Q21.60,131.50 23.20,131.50H54.20Q55.80,131.50 55.80,129.90V119.60Z" fill="#e6e4e1" stroke="#cfccc7" stroke-width="0.6"/>
<text x="25.80" y="128.60" font-size="6.8" fill="#4f4f4f"  textLength="25.60" lengthAdjust="spacingAndGlyphs">Polyline</text>
<text x="1.60" y="145.30" font-size="6.8" fill="#4f4f4f"  textLength="17.50" lengthAdjust="spacingAndGlyphs">Circle</text>
<rect x="76.20" y="140.10" width="5.60" height="5.40" rx="1.2" ry="1.2" fill="#d8d6d3" stroke="#a3a09b" stroke-width="0.5" />
<rect x="84.70" y="140.10" width="5.60" height="5.40" rx="1.2" ry="1.2" fill="#d8d6d3" stroke="#a3a09b" stroke-width="0.5" />
<path d="M77.70,141.70h2.6v2.4h-2.6z M78.80,141.30v1.6" fill="none" stroke="#6a6864" stroke-width="0.5"/>
<path d="M86.20,141.50l2.6,2.6 M88.80,141.50l-2.6,2.6" fill="none" stroke="#55534f" stroke-width="0.8"/>
<rect x="4.30" y="160.40" width="12.40" height="12.50" rx="1.8" ry="1.8" fill="url(#btn)" stroke="#cbc8c3" stroke-width="0.6" />
<rect x="21.90" y="160.40" width="12.40" height="12.50" rx="1.8" ry="1.8" fill="url(#btn)" stroke="#cbc8c3" stroke-width="0.6" />
<rect x="39.50" y="160.40" width="12.40" height="12.50" rx="1.8" ry="1.8" fill="url(#btn)" stroke="#cbc8c3" stroke-width="0.6" />
<rect x="57.10" y="160.40" width="12.40" height="12.50" rx="1.8" ry="1.8" fill="url(#btn)" stroke="#cbc8c3" stroke-width="0.6" />
<rect x="74.90" y="160.40" width="12.40" height="12.50" rx="1.8" ry="1.8" fill="url(#btn)" stroke="#cbc8c3" stroke-width="0.6" />
<rect x="4.30" y="185.80" width="12.40" height="12.50" rx="1.8" ry="1.8" fill="url(#btn)" stroke="#cbc8c3" stroke-width="0.6" />
<rect x="21.90" y="185.80" width="12.40" height="12.50" rx="1.8" ry="1.8" fill="url(#btn)" stroke="#cbc8c3" stroke-width="0.6" />
<rect x="39.50" y="185.80" width="12.40" height="12.50" rx="1.8" ry="1.8" fill="url(#btn)" stroke="#cbc8c3" stroke-width="0.6" />
<rect x="57.10" y="185.80" width="12.40" height="12.50" rx="1.8" ry="1.8" fill="url(#btn)" stroke="#cbc8c3" stroke-width="0.6" />
<line x1="1.00" y1="211.00" x2="92.50" y2="211.00" stroke="#cfccc7" stroke-width="0.7" />
<path d="M1.00,211.00V223.00Q1.00,224.60 2.60,224.60H25.00Q26.60,224.60 26.60,223.00V211.00Z" fill="#faf9f8" stroke="#d2cfca" stroke-width="0.6"/>
<text x="4.30" y="220.30" font-size="6.8" fill="#4f4f4f"  textLength="17.90" lengthAdjust="spacingAndGlyphs">Circle</text>
<path d="M27.00,211.30V221.60Q27.00,223.20 28.60,223.20H51.40Q53.00,223.20 53.00,221.60V211.30Z" fill="#e6e4e1" stroke="#cfccc7" stroke-width="0.6"/>
<text x="30.70" y="220.30" font-size="6.8" fill="#4f4f4f"  textLength="18.70" lengthAdjust="spacingAndGlyphs">Curve</text>
<path d="M53.40,211.30V221.60Q53.40,223.20 55.00,223.20H81.60Q83.20,223.20 83.20,221.60V211.30Z" fill="#e6e4e1" stroke="#cfccc7" stroke-width="0.6"/>
<text x="57.80" y="220.30" font-size="6.8" fill="#4f4f4f"  textLength="21.20" lengthAdjust="spacingAndGlyphs">Ellipse</text>
<text x="1.60" y="237.60" font-size="6.8" fill="#4f4f4f"  textLength="34.50" lengthAdjust="spacingAndGlyphs">Dimension</text>
<rect x="76.20" y="232.40" width="5.60" height="5.40" rx="1.2" ry="1.2" fill="#d8d6d3" stroke="#a3a09b" stroke-width="0.5" />
<rect x="84.70" y="232.40" width="5.60" height="5.40" rx="1.2" ry="1.2" fill="#d8d6d3" stroke="#a3a09b" stroke-width="0.5" />
<path d="M77.70,234.00h2.6v2.4h-2.6z M78.80,233.60v1.6" fill="none" stroke="#6a6864" stroke-width="0.5"/>
<path d="M86.20,233.80l2.6,2.6 M88.80,233.80l-2.6,2.6" fill="none" stroke="#55534f" stroke-width="0.8"/>
<rect x="4.30" y="252.70" width="12.40" height="12.50" rx="1.8" ry="1.8" fill="url(#btn)" stroke="#cbc8c3" stroke-width="0.6" />
<rect x="21.90" y="252.70" width="12.40" height="12.50" rx="1.8" ry="1.8" fill="url(#btn)" stroke="#cbc8c3" stroke-width="0.6" />
<rect x="39.50" y="252.70" width="12.40" height="12.50" rx="1.8" ry="1.8" fill="url(#btn)" stroke="#cbc8c3" stroke-width="0.6" />
<rect x="57.10" y="252.70" width="12.40" height="12.50" rx="1.8" ry="1.8" fill="url(#btn)" stroke="#cbc8c3" stroke-width="0.6" />
<rect x="74.90" y="252.70" width="12.40" height="12.50" rx="1.8" ry="1.8" fill="url(#btn)" stroke="#cbc8c3" stroke-width="0.6" />
<rect x="4.30" y="278.00" width="12.40" height="12.50" rx="1.8" ry="1.8" fill="url(#btn)" stroke="#cbc8c3" stroke-width="0.6" />
<rect x="21.90" y="278.00" width="12.40" height="12.50" rx="1.8" ry="1.8" fill="url(#btn)" stroke="#cbc8c3" stroke-width="0.6" />
<rect x="39.50" y="278.00" width="12.40" height="12.50" rx="1.8" ry="1.8" fill="url(#btn)" stroke="#cbc8c3" stroke-width="0.6" />
<line x1="1.00" y1="303.00" x2="92.50" y2="303.00" stroke="#cfccc7" stroke-width="0.7" />
<path d="M1.00,303.00V315.00Q1.00,316.60 2.60,316.60H40.60Q42.20,316.60 42.20,315.00V303.00Z" fill="#faf9f8" stroke="#d2cfca" stroke-width="0.6"/>
<text x="4.10" y="312.30" font-size="6.8" fill="#4f4f4f"  textLength="34.40" lengthAdjust="spacingAndGlyphs">Dimension</text>
<path d="M42.60,303.30V313.60Q42.60,315.20 44.20,315.20H62.00Q63.60,315.20 63.60,313.60V303.30Z" fill="#e6e4e1" stroke="#cfccc7" stroke-width="0.6"/>
<text x="46.50" y="312.30" font-size="6.8" fill="#4f4f4f"  textLength="12.90" lengthAdjust="spacingAndGlyphs">Info</text>
<path d="M64.00,303.30V313.60Q64.00,315.20 65.60,315.20H90.00Q91.60,315.20 91.60,313.60V303.30Z" fill="#e6e4e1" stroke="#cfccc7" stroke-width="0.6"/>
<text x="67.50" y="312.30" font-size="6.8" fill="#4f4f4f"  textLength="19.60" lengthAdjust="spacingAndGlyphs">Select</text>
<text x="1.60" y="329.40" font-size="6.8" fill="#4f4f4f"  textLength="22.20" lengthAdjust="spacingAndGlyphs">Modify</text>
<rect x="76.20" y="324.20" width="5.60" height="5.40" rx="1.2" ry="1.2" fill="#d8d6d3" stroke="#a3a09b" stroke-width="0.5" />
<rect x="84.70" y="324.20" width="5.60" height="5.40" rx="1.2" ry="1.2" fill="#d8d6d3" stroke="#a3a09b" stroke-width="0.5" />
<path d="M77.70,325.80h2.6v2.4h-2.6z M78.80,325.40v1.6" fill="none" stroke="#6a6864" stroke-width="0.5"/>
<path d="M86.20,325.60l2.6,2.6 M88.80,325.60l-2.6,2.6" fill="none" stroke="#55534f" stroke-width="0.8"/>
<rect x="4.30" y="334.90" width="12.40" height="12.50" rx="1.8" ry="1.8" fill="url(#btn)" stroke="#cbc8c3" stroke-width="0.6" />
<rect x="21.90" y="334.90" width="12.40" height="12.50" rx="1.8" ry="1.8" fill="url(#btn)" stroke="#cbc8c3" stroke-width="0.6" />
<rect x="39.50" y="334.90" width="12.40" height="12.50" rx="1.8" ry="1.8" fill="url(#btn)" stroke="#cbc8c3" stroke-width="0.6" />
<rect x="57.10" y="334.90" width="12.40" height="12.50" rx="1.8" ry="1.8" fill="url(#btn)" stroke="#cbc8c3" stroke-width="0.6" />
<rect x="74.90" y="334.90" width="12.40" height="12.50" rx="1.8" ry="1.8" fill="url(#btn)" stroke="#cbc8c3" stroke-width="0.6" />
<rect x="4.30" y="350.80" width="12.40" height="12.50" rx="1.8" ry="1.8" fill="url(#btn)" stroke="#cbc8c3" stroke-width="0.6" />
<rect x="21.90" y="350.80" width="12.40" height="12.50" rx="1.8" ry="1.8" fill="url(#btn)" stroke="#cbc8c3" stroke-width="0.6" />
<rect x="39.50" y="350.80" width="12.40" height="12.50" rx="1.8" ry="1.8" fill="url(#btn)" stroke="#cbc8c3" stroke-width="0.6" />
<rect x="57.10" y="350.80" width="12.40" height="12.50" rx="1.8" ry="1.8" fill="url(#btn)" stroke="#cbc8c3" stroke-width="0.6" />
<rect x="74.90" y="350.80" width="12.40" height="12.50" rx="1.8" ry="1.8" fill="url(#btn)" stroke="#cbc8c3" stroke-width="0.6" />
<rect x="4.30" y="366.80" width="12.40" height="12.50" rx="1.8" ry="1.8" fill="url(#btn)" stroke="#cbc8c3" stroke-width="0.6" />
<rect x="21.90" y="366.80" width="12.40" height="12.50" rx="1.8" ry="1.8" fill="url(#btn)" stroke="#cbc8c3" stroke-width="0.6" />
<rect x="39.50" y="366.80" width="12.40" height="12.50" rx="1.8" ry="1.8" fill="url(#btn)" stroke="#cbc8c3" stroke-width="0.6" />
<rect x="57.10" y="366.80" width="12.40" height="12.50" rx="1.8" ry="1.8" fill="url(#btn)" stroke="#cbc8c3" stroke-width="0.6" />
<rect x="74.90" y="366.80" width="12.40" height="12.50" rx="1.8" ry="1.8" fill="url(#btn)" stroke="#cbc8c3" stroke-width="0.6" />
<rect x="4.30" y="382.90" width="12.40" height="12.50" rx="1.8" ry="1.8" fill="url(#btn)" stroke="#cbc8c3" stroke-width="0.6" />
<rect x="21.90" y="382.90" width="12.40" height="12.50" rx="1.8" ry="1.8" fill="url(#btn)" stroke="#cbc8c3" stroke-width="0.6" />
<rect x="39.50" y="382.90" width="12.40" height="12.50" rx="1.8" ry="1.8" fill="url(#btn)" stroke="#cbc8c3" stroke-width="0.6" />
<rect x="57.10" y="382.90" width="12.40" height="12.50" rx="1.8" ry="1.8" fill="url(#btn)" stroke="#cbc8c3" stroke-width="0.6" />
<rect x="74.90" y="382.90" width="12.40" height="12.50" rx="1.8" ry="1.8" fill="url(#btn)" stroke="#cbc8c3" stroke-width="0.6" />
<path d="M44.6,134.8h0.8 M46,134.8h0.8 M47.4,134.8h0.8" stroke="#c4c1bc" stroke-width="0.7"/>
<path d="M44.6,226.6h0.8 M46,226.6h0.8 M47.4,226.6h0.8" stroke="#c4c1bc" stroke-width="0.7"/>
<path d="M44.6,318.6h0.8 M46,318.6h0.8 M47.4,318.6h0.8" stroke="#c4c1bc" stroke-width="0.7"/>
<rect x="619.20" y="21.00" width="6.40" height="367.30" fill="#dddbd8" />
<rect x="620.00" y="148.00" width="5.00" height="112.00" rx="2.4" ry="2.4" fill="#f6f5f4" stroke="#cfccc8" stroke-width="0.4" />
<rect x="619.60" y="21.40" width="5.60" height="5.80" rx="1" ry="1" fill="#f3f2f0" stroke="#cfccc8" stroke-width="0.4" />
<rect x="619.60" y="382.20" width="5.60" height="5.80" rx="1" ry="1" fill="#f3f2f0" stroke="#cfccc8" stroke-width="0.4" />
<path d="M621.3,25l1.1,-1.5l1.1,1.5z M621.3,384.4l1.1,1.5l1.1,-1.5z" fill="#77746f"/>
<rect x="95.00" y="388.30" width="501.50" height="6.60" fill="#dddbd8" />
<rect x="266.60" y="389.20" width="174.60" height="5.00" rx="2.4" ry="2.4" fill="#f6f5f4" stroke="#cfccc8" stroke-width="0.4" />
<rect x="95.40" y="388.80" width="5.80" height="5.60" rx="1" ry="1" fill="#f3f2f0" stroke="#cfccc8" stroke-width="0.4" />
<rect x="590.40" y="388.80" width="5.80" height="5.60" rx="1" ry="1" fill="#f3f2f0" stroke="#cfccc8" stroke-width="0.4" />
<path d="M99,390.5l-1.5,1.1l1.5,1.1z M592.6,390.5l1.5,1.1l-1.5,1.1z" fill="#77746f"/>
<path d="M352.6,391.7h0.7 M353.9,391.7h0.7 M355.2,391.7h0.7" stroke="#bdbab5" stroke-width="0.6"/>
<text x="599.30" y="394.40" font-size="6.8" fill="#4f4f4f"  textLength="25.70" lengthAdjust="spacingAndGlyphs">10 / 100</text>
<text x="630.60" y="29.00" font-size="6.8" fill="#4f4f4f"  textLength="30.50" lengthAdjust="spacingAndGlyphs">Layer List</text>
<rect x="752.80" y="23.80" width="5.60" height="5.40" rx="1.2" ry="1.2" fill="#d8d6d3" stroke="#a3a09b" stroke-width="0.5" />
<rect x="761.60" y="23.80" width="5.60" height="5.40" rx="1.2" ry="1.2" fill="#d8d6d3" stroke="#a3a09b" stroke-width="0.5" />
<path d="M754.30,25.40h2.6v2.4h-2.6z M755.40,25.00v1.6" fill="none" stroke="#6a6864" stroke-width="0.5"/>
<path d="M763.10,25.20l2.6,2.6 M765.70,25.20l-2.6,2.6" fill="none" stroke="#55534f" stroke-width="0.8"/>
<rect x="630.60" y="35.00" width="135.60" height="11.00" rx="2" ry="2" fill="#ffffff" stroke="#cfccc8" stroke-width="0.6" />
<rect x="644.90" y="48.10" width="9.20" height="9.20" rx="1.8" ry="1.8" fill="url(#btn)" stroke="#cbc8c3" stroke-width="0.6" />
<rect x="669.50" y="48.10" width="9.20" height="9.20" rx="1.8" ry="1.8" fill="url(#btn)" stroke="#cbc8c3" stroke-width="0.6" />
<rect x="694.00" y="48.10" width="9.20" height="9.20" rx="1.8" ry="1.8" fill="url(#btn)" stroke="#cbc8c3" stroke-width="0.6" />
<rect x="718.60" y="48.10" width="9.20" height="9.20" rx="1.8" ry="1.8" fill="url(#btn)" stroke="#cbc8c3" stroke-width="0.6" />
<rect x="743.60" y="48.10" width="9.20" height="9.20" rx="1.8" ry="1.8" fill="url(#btn)" stroke="#cbc8c3" stroke-width="0.6" />
<rect x="630.80" y="60.20" width="136.00" height="130.40" fill="#ffffff" />
<line x1="630.80" y1="60.20" x2="766.60" y2="60.20" stroke="#d6d3cf" stroke-width="0.6" />
<line x1="630.80" y1="190.60" x2="766.60" y2="190.60" stroke="#d6d3cf" stroke-width="0.6" />
<rect x="670.40" y="60.05" width="9.60" height="9.70" fill="#000000" />
<text x="682.30" y="67.60" font-size="6.8" fill="#3e3e3e" >0</text>
<rect x="670.40" y="72.35" width="9.60" height="9.70" fill="#ff0000" />
<text x="682.30" y="79.90" font-size="6.8" fill="#3e3e3e"  textLength="22.00" lengthAdjust="spacingAndGlyphs">Center</text>
<rect x="680.00" y="83.80" width="87.00" height="11.50" fill="#e4e3e1" />
<rect x="670.40" y="84.65" width="9.60" height="9.70" fill="#ff00ff" />
<text x="682.30" y="92.20" font-size="6.8" fill="#3e3e3e"  textLength="35.00" lengthAdjust="spacingAndGlyphs">Dimension</text>
<rect x="670.40" y="96.95" width="9.60" height="9.70" fill="#a0a0a4" />
<text x="682.30" y="104.50" font-size="6.8" fill="#3e3e3e"  textLength="26.20" lengthAdjust="spacingAndGlyphs">Hatches</text>
<rect x="670.40" y="109.25" width="9.60" height="9.70" fill="#0000ff" />
<text x="682.30" y="116.80" font-size="6.8" fill="#3e3e3e"  textLength="27.00" lengthAdjust="spacingAndGlyphs">Sections</text>
<path d="M629.80,191.80V204.40Q629.80,206.00 631.40,206.00H666.40Q668.00,206.00 668.00,204.40V191.80Z" fill="#faf9f8" stroke="#d2cfca" stroke-width="0.6"/>
<text x="633.50" y="201.80" font-size="6.8" fill="#4f4f4f"  textLength="30.50" lengthAdjust="spacingAndGlyphs">Layer List</text>
<path d="M668.40,192.10V202.80Q668.40,204.40 670.00,204.40H706.20Q707.80,204.40 707.80,202.80V192.10Z" fill="#e6e4e1" stroke="#cfccc7" stroke-width="0.6"/>
<text x="672.80" y="201.80" font-size="6.8" fill="#4f4f4f"  textLength="30.70" lengthAdjust="spacingAndGlyphs">Block List</text>
<path d="M708.20,192.10V202.80Q708.20,204.40 709.80,204.40H765.90Q767.50,204.40 767.50,202.80V192.10Z" fill="#e6e4e1" stroke="#cfccc7" stroke-width="0.6"/>
<text x="711.80" y="201.80" font-size="6.8" fill="#4f4f4f"  textLength="51.70" lengthAdjust="spacingAndGlyphs">Library Browser</text>
<path d="M696.6,208.6h0.8 M698,208.6h0.8 M699.4,208.6h0.8" stroke="#c4c1bc" stroke-width="0.7"/>
<text x="630.60" y="218.00" font-size="6.8" fill="#4f4f4f"  textLength="46.20" lengthAdjust="spacingAndGlyphs">Command line</text>
<rect x="752.80" y="212.80" width="5.60" height="5.40" rx="1.2" ry="1.2" fill="#d8d6d3" stroke="#a3a09b" stroke-width="0.5" />
<rect x="761.60" y="212.80" width="5.60" height="5.40" rx="1.2" ry="1.2" fill="#d8d6d3" stroke="#a3a09b" stroke-width="0.5" />
<path d="M754.30,214.40h2.6v2.4h-2.6z M755.40,214.00v1.6" fill="none" stroke="#6a6864" stroke-width="0.5"/>
<path d="M763.10,214.20l2.6,2.6 M765.70,214.20l-2.6,2.6" fill="none" stroke="#55534f" stroke-width="0.8"/>
<rect x="630.20" y="222.60" width="136.60" height="154.20" fill="#ffffff" />
<rect x="630.2" y="222.6" width="136.6" height="154.2" fill="none" stroke="#d6d3cf" stroke-width="0.6"/>
<text x="631.60" y="231.30" font-size="6.8" fill="#3e3e3e"  textLength="61.20" lengthAdjust="spacingAndGlyphs">Loaded document:</text>
<text x="631.60" y="240.10" font-size="6.8" fill="#3e3e3e"  textLength="89.50" lengthAdjust="spacingAndGlyphs">/home/pamela/practice.dxf</text>
<rect x="629.40" y="377.20" width="137.40" height="8.40" fill="#efeeec" />
<text x="629.40" y="384.00" font-size="6.8" fill="#4f4f4f"  textLength="34.50" lengthAdjust="spacingAndGlyphs">Command:</text>
<rect x="629.40" y="386.60" width="137.20" height="9.60" rx="1.5" ry="1.5" fill="#ffffff" stroke="#d6d3cf" stroke-width="0.5" />
<line x1="0.80" y1="416.50" x2="766.60" y2="416.50" stroke="#dcdad6" stroke-width="0.7" />
<text x="1.50" y="422.40" font-size="4.5" fill="#666666"  textLength="38.80" lengthAdjust="spacingAndGlyphs">107.5593 , 74.1044</text>
<text x="1.50" y="429.00" font-size="4.5" fill="#666666"  textLength="36.80" lengthAdjust="spacingAndGlyphs">130.6157 &lt; 34.57°</text>
<text x="96.00" y="422.40" font-size="4.5" fill="#666666"  textLength="38.80" lengthAdjust="spacingAndGlyphs">107.5593 , 74.1044</text>
<text x="96.00" y="429.00" font-size="4.5" fill="#666666"  textLength="36.80" lengthAdjust="spacingAndGlyphs">130.6157 &lt; 34.57°</text>
<text x="342.60" y="422.40" font-size="4.5" fill="#666666"  textLength="17.90" lengthAdjust="spacingAndGlyphs">Selected</text>
<text x="342.60" y="429.00" font-size="4.5" fill="#666666" >0</text>
<text x="367.60" y="422.40" font-size="4.5" fill="#666666"  textLength="25.00" lengthAdjust="spacingAndGlyphs">Total Length</text>
<text x="367.60" y="429.00" font-size="4.5" fill="#666666" >0</text>
<text x="400.00" y="422.40" font-size="4.5" fill="#666666"  textLength="28.30" lengthAdjust="spacingAndGlyphs">Current Layer</text>
<text x="400.00" y="429.00" font-size="4.5" fill="#666666"  textLength="22.00" lengthAdjust="spacingAndGlyphs">Dimension</text>
<text x="352.00" y="408.70" font-size="6.9" fill="#4f4f4f"  textLength="12.70" lengthAdjust="spacingAndGlyphs">Left</text>
<rect x="369.30" y="400.80" width="22.40" height="11.00" rx="2" ry="2" fill="url(#btn)" stroke="#c4c1bc" stroke-width="0.6" />
<text x="372.30" y="408.80" font-size="6.9" fill="#4f4f4f"  textLength="17.30" lengthAdjust="spacingAndGlyphs">Right</text>
<rect x="393.50" y="400.80" width="16.50" height="11.00" rx="2" ry="2" fill="url(#btn)" stroke="#c4c1bc" stroke-width="0.6" />
<text x="396.00" y="408.80" font-size="6.9" fill="#4f4f4f"  textLength="11.30" lengthAdjust="spacingAndGlyphs">Top</text>
<rect x="411.80" y="400.80" width="29.90" height="11.00" rx="2" ry="2" fill="url(#btn)" stroke="#c4c1bc" stroke-width="0.6" />
<text x="414.30" y="408.80" font-size="6.9" fill="#4f4f4f"  textLength="25.00" lengthAdjust="spacingAndGlyphs">Bottom</text>
<rect x="444.00" y="400.80" width="32.00" height="11.00" rx="2" ry="2" fill="url(#btn)" stroke="#c4c1bc" stroke-width="0.6" />
<text x="446.70" y="408.80" font-size="6.9" fill="#4f4f4f"  textLength="26.70" lengthAdjust="spacingAndGlyphs">Floating</text>
<g transform="translate(4.30,43.60)">
<path d="M2.6,9.6L9.0,3.9" fill="none" stroke="#5d5d5d" stroke-width="0.7" />
<circle cx="2.70" cy="9.50" r="1.15" fill="#6cc01c" stroke="#4f9a12" stroke-width="0.3"/>
<circle cx="8.90" cy="4.00" r="1.15" fill="#6cc01c" stroke="#4f9a12" stroke-width="0.3"/>
</g>
<g transform="translate(21.90,43.60)">
<path d="M3.0,9.2L9.6,4.4" fill="none" stroke="#5d5d5d" stroke-width="0.7" />
<circle cx="3.10" cy="9.10" r="1.15" fill="#6cc01c" stroke="#4f9a12" stroke-width="0.3"/>
</g>
<g transform="translate(39.50,43.60)">
<path d="M2.6,6.2H10.6" fill="none" stroke="#5d5d5d" stroke-width="0.7" />
<circle cx="2.90" cy="6.20" r="1.15" fill="#6cc01c" stroke="#4f9a12" stroke-width="0.3"/>
</g>
<g transform="translate(57.10,43.60)">
<path d="M6.2,2.4V10" fill="none" stroke="#5d5d5d" stroke-width="0.7" />
<circle cx="6.20" cy="9.60" r="1.15" fill="#6cc01c" stroke="#4f9a12" stroke-width="0.3"/>
</g>
<g transform="translate(74.90,43.60)">
<path d="M3.2,3.2H9.6V9.6H3.2Z" fill="none" stroke="#5d5d5d" stroke-width="0.8" />
<circle cx="3.20" cy="9.60" r="1.15" fill="#6cc01c" stroke="#4f9a12" stroke-width="0.3"/>
<circle cx="9.60" cy="3.20" r="1.15" fill="#6cc01c" stroke="#4f9a12" stroke-width="0.3"/>
</g>
<g transform="translate(4.30,68.70)">
<path d="M4.1,1.4L10.0,6.6 M1.3,5.9L7.6,10.6" fill="none" stroke="#5d5d5d" stroke-width="0.7" />
<circle cx="4.70" cy="8.30" r="1.15" fill="#6cc01c" stroke="#4f9a12" stroke-width="0.3"/>
</g>
<g transform="translate(21.90,68.70)">
<path d="M4.1,1.4L10.5,6.6 M2.3,5.9L8.2,10.6 M3.6,7.4L8.8,3.6" fill="none" stroke="#5d5d5d" stroke-width="0.7" />
<circle cx="7.00" cy="5.20" r="1.15" fill="#6cc01c" stroke="#4f9a12" stroke-width="0.3"/>
</g>
<g transform="translate(39.50,68.70)">
<path d="M2.4,2.4V10.2H10.6 M2.9,9.6L9.4,2.4" fill="none" stroke="#5d5d5d" stroke-width="0.6" />
<circle cx="3.30" cy="9.20" r="1.3" fill="#6cc01c" stroke="#4f9a12" stroke-width="0.3"/>
<circle cx="5.4" cy="4.8" r="0.55" fill="#445"/><circle cx="7.7" cy="7.2" r="0.55" fill="#445"/>
</g>
<g transform="translate(57.10,68.70)">
<circle cx="6.40" cy="8.20" r="2.6" fill="none" stroke="#5d5d5d" stroke-width="0.7"/>
<path d="M3.5,7.0L8.2,2.7" fill="none" stroke="#5d5d5d" stroke-width="0.7" />
<circle cx="7.90" cy="2.90" r="1.15" fill="#6cc01c" stroke="#4f9a12" stroke-width="0.3"/>
</g>
<g transform="translate(74.90,68.70)">
<circle cx="4.50" cy="8.80" r="2.5" fill="none" stroke="#5d5d5d" stroke-width="0.7"/>
<circle cx="8.00" cy="6.20" r="2.6" fill="none" stroke="#5d5d5d" stroke-width="0.7"/>
<path d="M2.7,7.0L9.7,1.8" fill="none" stroke="#5d5d5d" stroke-width="0.7" />
<circle cx="9.50" cy="2.00" r="1.15" fill="#6cc01c" stroke="#4f9a12" stroke-width="0.3"/>
</g>
<g transform="translate(4.30,93.60)">
<circle cx="6.40" cy="9.10" r="2.6" fill="none" stroke="#5d5d5d" stroke-width="0.7"/>
<path d="M1.2,9.8L6.4,3.3 M5.3,2.1L10.6,6.8" fill="none" stroke="#5d5d5d" stroke-width="0.7" />
<circle cx="7.00" cy="3.30" r="1.15" fill="#6cc01c" stroke="#4f9a12" stroke-width="0.3"/>
<circle cx="1.50" cy="9.50" r="1.15" fill="#6cc01c" stroke="#4f9a12" stroke-width="0.3"/>
</g>
<g transform="translate(21.90,93.60)">
<path d="M5.9,2.6V10.9 M2.3,6.2H10.0" fill="none" stroke="#5d5d5d" stroke-width="0.7" />
<path d="M6.0,4.2L8.2,6.0L6.0,6.0Z" fill="#6cc01c" stroke="#4f9a12" stroke-width="0.3" />
</g>
<g transform="translate(39.50,93.60)">
<path d="M2.3,6.2H10.6 M3.5,9.2L8.8,3.2" fill="none" stroke="#5d5d5d" stroke-width="0.7" />
<circle cx="6.10" cy="6.50" r="1.15" fill="#6cc01c" stroke="#4f9a12" stroke-width="0.3"/>
</g>
<g transform="translate(57.10,93.60)">
<path d="M6.40,2.50L10.58,5.54L8.99,10.46L3.81,10.46L2.22,5.54Z" fill="none" stroke="#5d5d5d" stroke-width="0.7" />
<circle cx="6.40" cy="6.80" r="1.0" fill="#6cc01c" stroke="#4f9a12" stroke-width="0.3"/>
<circle cx="8.99" cy="10.46" r="1.15" fill="#6cc01c" stroke="#4f9a12" stroke-width="0.3"/>
</g>
<g transform="translate(74.90,93.60)">
<path d="M6.50,2.30L10.68,5.34L9.09,10.26L3.91,10.26L2.32,5.34Z" fill="none" stroke="#5d5d5d" stroke-width="0.7" />
<circle cx="9.09" cy="10.26" r="1.15" fill="#6cc01c" stroke="#4f9a12" stroke-width="0.3"/>
<circle cx="3.91" cy="10.26" r="1.15" fill="#6cc01c" stroke="#4f9a12" stroke-width="0.3"/>
</g>
<g transform="translate(4.30,160.40)">
<circle cx="5.90" cy="6.40" r="4.1" fill="none" stroke="#5d5d5d" stroke-width="0.7"/>
<circle cx="5.90" cy="6.40" r="1.1" fill="#6cc01c" stroke="#4f9a12" stroke-width="0.3"/>
<circle cx="5.90" cy="2.30" r="1.1" fill="#6cc01c" stroke="#4f9a12" stroke-width="0.3"/>
</g>
<g transform="translate(21.90,160.40)">
<circle cx="6.40" cy="6.40" r="4.2" fill="none" stroke="#5d5d5d" stroke-width="0.7"/>
<circle cx="3.50" cy="3.50" r="1.15" fill="#6cc01c" stroke="#4f9a12" stroke-width="0.3"/>
<circle cx="9.20" cy="9.20" r="1.15" fill="#6cc01c" stroke="#4f9a12" stroke-width="0.3"/>
</g>
<g transform="translate(39.50,160.40)">
<circle cx="6.10" cy="6.70" r="4.2" fill="none" stroke="#5d5d5d" stroke-width="0.7"/>
<path d="M6.1,6.7V3.0 M6.1,6.7L9.8,4.8" fill="none" stroke="#5d5d5d" stroke-width="0.6" />
<circle cx="9.90" cy="4.60" r="1.0" fill="#6cc01c" stroke="#4f9a12" stroke-width="0.3"/>
<circle cx="7.60" cy="2.60" r="1.0" fill="#6cc01c" stroke="#4f9a12" stroke-width="0.3"/>
</g>
<g transform="translate(57.10,160.40)">
<circle cx="6.10" cy="6.40" r="4.2" fill="none" stroke="#5d5d5d" stroke-width="0.7"/>
<circle cx="9.10" cy="3.50" r="1.15" fill="#6cc01c" stroke="#4f9a12" stroke-width="0.3"/>
<circle cx="3.20" cy="8.90" r="1.15" fill="#6cc01c" stroke="#4f9a12" stroke-width="0.3"/>
<circle cx="9.10" cy="9.10" r="1.15" fill="#6cc01c" stroke="#4f9a12" stroke-width="0.3"/>
</g>
<g transform="translate(74.90,160.40)">
<circle cx="6.60" cy="6.40" r="4.2" fill="none" stroke="#5d5d5d" stroke-width="0.7"/>
<path d="M3.9,3.2L6.8,6.0" fill="none" stroke="#5d5d5d" stroke-width="0.8" />
<circle cx="3.90" cy="3.30" r="1.15" fill="#6cc01c" stroke="#4f9a12" stroke-width="0.3"/>
<circle cx="6.80" cy="6.00" r="1.15" fill="#6cc01c" stroke="#4f9a12" stroke-width="0.3"/>
</g>
<g transform="translate(4.30,185.80)">
<circle cx="2.90" cy="8.30" r="1.7" fill="none" stroke="#9a9a9a" stroke-width="0.6"/>
<circle cx="5.90" cy="7.70" r="1.7" fill="none" stroke="#9a9a9a" stroke-width="0.6"/>
<circle cx="5.30" cy="10.00" r="1.5" fill="none" stroke="#9a9a9a" stroke-width="0.6"/>
<circle cx="5.60" cy="5.20" r="0.9" fill="#8fd24a" stroke="#4f9a12" stroke-width="0.3"/>
</g>
<g transform="translate(21.90,185.80)">
<circle cx="3.50" cy="8.90" r="2.6" fill="none" stroke="#555" stroke-width="0.7"/>
<circle cx="8.00" cy="6.00" r="3.0" fill="none" stroke="#555" stroke-width="0.6"/>
<path d="M6.2,3.6A3,3 0 0 1 10.9,7.0" fill="none" stroke="#6cc01c" stroke-width="1.3" />
</g>
<g transform="translate(39.50,185.80)">
<circle cx="4.10" cy="7.70" r="1.7" fill="none" stroke="#9a9a9a" stroke-width="0.6"/>
<circle cx="7.00" cy="8.90" r="1.9" fill="none" stroke="#9a9a9a" stroke-width="0.6"/>
<circle cx="7.00" cy="5.90" r="1.5" fill="none" stroke="#7ab648" stroke-width="0.7"/>
</g>
<g transform="translate(57.10,185.80)">
<circle cx="2.40" cy="8.90" r="1.6" fill="none" stroke="#9a9a9a" stroke-width="0.6"/>
<circle cx="5.30" cy="8.30" r="1.7" fill="none" stroke="#9a9a9a" stroke-width="0.6"/>
<circle cx="8.20" cy="8.30" r="1.7" fill="none" stroke="#9a9a9a" stroke-width="0.6"/>
<circle cx="8.20" cy="5.40" r="1.6" fill="none" stroke="#9a9a9a" stroke-width="0.6"/>
<path d="M2.3,7.8L9.4,2.6" fill="none" stroke="#9a9a9a" stroke-width="0.6" />
<circle cx="5.90" cy="6.60" r="0.9" fill="#8fd24a" stroke="#4f9a12" stroke-width="0.3"/>
</g>
<g transform="translate(4.30,252.70)">
<path d="M2.6,4.6L7.6,9.3" fill="none" stroke="#8a8a8a" stroke-width="2.4" stroke-linecap="round"/>
<path d="M2.6,4.6L7.6,9.3" fill="none" stroke="#f4f4f4" stroke-width="1.4" stroke-linecap="round"/>
<path d="M3.60,3.60L8.60,8.20" fill="none" stroke="#4f9a12" stroke-width="0.55" />
<path d="M3.60,3.60L4.12,5.98L6.02,3.92Z" fill="#6cc01c" stroke="#4f9a12" stroke-width="0.25"/>
<path d="M8.60,8.20L6.18,7.88L8.08,5.82Z" fill="#6cc01c" stroke="#4f9a12" stroke-width="0.25"/>
<text x="8.80" y="4.80" font-size="5.9" font-weight="bold" fill="#111" text-anchor="middle">A</text>
</g>
<g transform="translate(21.90,252.70)">
<path d="M3.00,3.40L8.20,8.80" fill="none" stroke="#4f9a12" stroke-width="0.55" />
<path d="M3.00,3.40L3.38,5.81L5.40,3.87Z" fill="#6cc01c" stroke="#4f9a12" stroke-width="0.25"/>
<path d="M8.20,8.80L5.80,8.33L7.82,6.39Z" fill="#6cc01c" stroke="#4f9a12" stroke-width="0.25"/>
<text x="8.80" y="5.60" font-size="5.9" font-weight="bold" fill="#111" text-anchor="middle">A</text>
<path d="M2.3,5.2l1.2,-1.2" fill="none" stroke="#5d5d5d" stroke-width="0.5" />
</g>
<g transform="translate(39.50,252.70)">
<text x="6.40" y="5.60" font-size="5.9" font-weight="bold" fill="#111" text-anchor="middle">A</text>
<path d="M2.3,5.4V8.6 M10.5,5.4V8.6" fill="none" stroke="#888" stroke-width="0.5" />
<path d="M2.40,7.40L10.40,7.40" fill="none" stroke="#4f9a12" stroke-width="0.55" />
<path d="M2.40,7.40L4.40,8.80L4.40,6.00Z" fill="#6cc01c" stroke="#4f9a12" stroke-width="0.25"/>
<path d="M10.40,7.40L8.40,8.80L8.40,6.00Z" fill="#6cc01c" stroke="#4f9a12" stroke-width="0.25"/>
</g>
<g transform="translate(57.10,252.70)">
<path d="M5.50,2.00L5.50,9.80" fill="none" stroke="#4f9a12" stroke-width="0.55" />
<path d="M5.50,2.00L4.10,4.00L6.90,4.00Z" fill="#6cc01c" stroke="#4f9a12" stroke-width="0.25"/>
<path d="M5.50,9.80L4.10,7.80L6.90,7.80Z" fill="#6cc01c" stroke="#4f9a12" stroke-width="0.25"/>
<path d="M4.0,2.1H7.0 M4.0,9.8H7.0" fill="none" stroke="#888" stroke-width="0.5" />
<text x="8.80" y="7.60" font-size="5.9" font-weight="bold" fill="#111" text-anchor="middle">A</text>
</g>
<g transform="translate(74.90,252.70)">
<circle cx="9.10" cy="6.70" r="2.5" fill="none" stroke="#777" stroke-width="0.6"/>
<path d="M3.40,3.80L8.20,8.00" fill="none" stroke="#4f9a12" stroke-width="0.55" />
<path d="M3.40,3.80L3.98,6.17L5.83,4.06Z" fill="#6cc01c" stroke="#4f9a12" stroke-width="0.25"/>
<path d="M8.20,8.00L5.77,7.74L7.62,5.63Z" fill="#6cc01c" stroke="#4f9a12" stroke-width="0.25"/>
<rect x="1.7" y="6.4" width="1.9" height="1.7" fill="#222"/>
</g>
<g transform="translate(4.30,278.00)">
<circle cx="5.90" cy="5.90" r="4.0" fill="none" stroke="#555" stroke-width="0.8"/>
<path d="M3.40,3.60L8.80,9.00" fill="none" stroke="#4f9a12" stroke-width="0.55" />
<path d="M3.40,3.60L3.82,6.00L5.80,4.02Z" fill="#6cc01c" stroke="#4f9a12" stroke-width="0.25"/>
<path d="M8.80,9.00L6.40,8.58L8.38,6.60Z" fill="#6cc01c" stroke="#4f9a12" stroke-width="0.25"/>
<rect x="6.0" y="4.0" width="1.9" height="1.7" fill="#333"/>
</g>
<g transform="translate(21.90,278.00)">
<path d="M2.9,9.5L6.4,3.4 M5.4,4.0L10.0,8.2 M3.4,9.5H10.0" fill="none" stroke="#888" stroke-width="0.55" />
<circle cx="4.90" cy="4.30" r="1.0" fill="#6cc01c" stroke="#4f9a12" stroke-width="0.3"/>
<circle cx="3.50" cy="8.70" r="1.0" fill="#6cc01c" stroke="#4f9a12" stroke-width="0.3"/>
<rect x="6.0" y="6.6" width="1.6" height="1.4" fill="#333"/>
</g>
<g transform="translate(39.50,278.00)">
<path d="M1.9,3.5C5.0,3.2 6.6,4.2 9.0,8.0" fill="none" stroke="#888" stroke-width="0.7" />
<path d="M9.9,9.3L7.5,8.2L9.4,6.8Z" fill="#6cc01c" stroke="#4f9a12" stroke-width="0.3" />
</g>
<g transform="translate(4.30,334.90)">
<path d="M3.3,3.0L1.7,9.5H5.0Z" fill="#ececec" stroke="#777" stroke-width="0.55" />
<path d="M9.6,3.0L8.0,9.5H11.2Z" fill="#ececec" stroke="#777" stroke-width="0.55" />
<path d="M4.4,6.2L6.4,4.4V5.4H8.2V7.0H6.4V8.0Z" fill="#6cc01c" stroke="#4f9a12" stroke-width="0.3" />
</g>
<g transform="translate(21.90,334.90)">
<path d="M3.3,3.6L1.8,9.6H4.8Z" fill="#ececec" stroke="#777" stroke-width="0.55" />
<path d="M3.4,2.4L10.4,4.0H3.4Z" fill="#ececec" stroke="#777" stroke-width="0.55" />
<path d="M5.6,5.8H9.0V8.2L7.4,9.2L5.6,8.0Z" fill="#6cc01c" stroke="#4f9a12" stroke-width="0.3" />
</g>
<g transform="translate(39.50,334.90)">
<path d="M3.3,3.0L1.8,9.6H4.8Z" fill="#ececec" stroke="#777" stroke-width="0.55" />
<path d="M9.9,4.8L8.7,8.8H11.1Z" fill="#ececec" stroke="#777" stroke-width="0.55" />
<path d="M4.6,5.9L6.2,4.3L7.8,5.0V7.0L6.2,7.6Z" fill="#6cc01c" stroke="#4f9a12" stroke-width="0.3" />
</g>
<g transform="translate(57.10,334.90)">
<path d="M3.5,3.0L2.2,9.5H4.8Z" fill="#ececec" stroke="#777" stroke-width="0.55" />
<path d="M8.5,3.0L7.2,9.5H10.1Z" fill="#ececec" stroke="#777" stroke-width="0.55" />
<path d="M5.9,2.2V10.2" fill="none" stroke="#9adf5a" stroke-width="0.9" />
</g>
<g transform="translate(74.90,334.90)">
<circle cx="5.90" cy="6.20" r="4.2" fill="none" stroke="#666" stroke-width="0.7"/>
<path d="M3.20,6.20L8.60,6.20" fill="none" stroke="#4f9a12" stroke-width="0.6" />
<path d="M3.20,6.20L4.80,7.32L4.80,5.08Z" fill="#6cc01c" stroke="#4f9a12" stroke-width="0.25"/>
<path d="M8.60,6.20L7.00,7.32L7.00,5.08Z" fill="#6cc01c" stroke="#4f9a12" stroke-width="0.25"/>
<path d="M5.90,3.80L5.90,8.60" fill="none" stroke="#4f9a12" stroke-width="0.5" />
<path d="M5.90,3.80L5.06,5.00L6.74,5.00Z" fill="#6cc01c" stroke="#4f9a12" stroke-width="0.25"/>
<path d="M5.90,8.60L5.06,7.40L6.74,7.40Z" fill="#6cc01c" stroke="#4f9a12" stroke-width="0.25"/>
<rect x="7.75" y="1.85" width="1.7" height="1.7" fill="#6cc01c" stroke="#4f9a12" stroke-width="0.3"/>
</g>
<g transform="translate(4.30,350.80)">
<path d="M2.0,4.2L0.7,10.2H3.6Z" fill="#ececec" stroke="#777" stroke-width="0.55" />
<path d="M9.0,1.9L7.6,8.4H10.6Z" fill="#ececec" stroke="#777" stroke-width="0.55" />
<path d="M3.8,6.8L5.2,5.2L7.0,5.8V7.6L5.2,8.2Z" fill="#6cc01c" stroke="#4f9a12" stroke-width="0.3" />
</g>
<g transform="translate(21.90,350.80)">
<path d="M3.5,8.9L8.8,4.0" fill="none" stroke="#777" stroke-width="0.7" />
<circle cx="3.50" cy="8.90" r="1.2" fill="#6cc01c" stroke="#4f9a12" stroke-width="0.3"/>
<circle cx="8.80" cy="4.00" r="1.2" fill="#6cc01c" stroke="#4f9a12" stroke-width="0.3"/>
<circle cx="6.1" cy="6.4" r="0.9" fill="#334"/>
</g>
<g transform="translate(39.50,350.80)">
<path d="M1.8,9.5L9.4,3.7 M2.3,3.7L7.6,7.2" fill="none" stroke="#555" stroke-width="0.65" />
<rect x="9.05" y="2.35" width="1.9" height="1.9" fill="#6cc01c" stroke="#4f9a12" stroke-width="0.3"/>
</g>
<g transform="translate(57.10,350.80)">
<path d="M1.8,2.5L9.4,9.5 M1.8,9.5L9.4,4.3" fill="none" stroke="#555" stroke-width="0.65" />
<rect x="9.05" y="3.55" width="1.9" height="1.9" fill="#6cc01c" stroke="#4f9a12" stroke-width="0.3"/>
<rect x="9.05" y="8.55" width="1.9" height="1.9" fill="#6cc01c" stroke="#4f9a12" stroke-width="0.3"/>
</g>
<g transform="translate(74.90,350.80)">
<path d="M2.1,8.9L9.7,3.1" fill="none" stroke="#555" stroke-width="0.65" />
<rect x="9.15" y="2.05" width="1.9" height="1.9" fill="#6cc01c" stroke="#4f9a12" stroke-width="0.3"/>
</g>
<g transform="translate(4.30,366.80)">
<path d="M1.6,2.2A7.6,7.6 0 0 1 9.2,10.2 M1.6,3.6A6.2,6.2 0 0 1 7.8,10.2 M1.6,5.0A4.8,4.8 0 0 1 6.4,10.2" fill="none" stroke="#9c9c9c" stroke-width="0.7" />
</g>
<g transform="translate(21.90,366.80)">
<path d="M2.9,3.6H7.4Q10.0,3.8 10.0,6.4V9.5H2.9Z" fill="none" stroke="#8a8a8a" stroke-width="0.8" />
</g>
<g transform="translate(39.50,366.80)">
<path d="M2.3,2.5H10.0V9.6H2.3Z" fill="none" stroke="#333" stroke-width="0.55" />
<path d="M2.3,2.5V1.9 M10,2.5V1.9 M2.3,9.6v0.7 M10,9.6v0.7" fill="none" stroke="#333" stroke-width="0.4" />
<path d="M4.8,5.4L6.2,4.2L7.6,5.4V7.6H4.8Z" fill="#6cc01c" stroke="#4f9a12" stroke-width="0.3" />
<path d="M4.6,8.2H8.0" fill="none" stroke="#222" stroke-width="0.9" />
</g>
<g transform="translate(57.10,366.80)">
<path d="M2.3,2.5H10.0V9.6H2.3Z" fill="none" stroke="#333" stroke-width="0.55" />
<path d="M2.6,3.0L8.8,9.2" fill="none" stroke="#555" stroke-width="0.55" />
<path d="M6.2,7.0L10.8,4.6" fill="none" stroke="#6cd01a" stroke-width="1.5" stroke-linecap="round"/>
</g>
<g transform="translate(74.90,366.80)">
<path d="M2.3,2.5H10.0V9.6H2.3Z" fill="none" stroke="#333" stroke-width="0.55" />
<path d="M4.9,6.0L6.8,4.2H8.0V7.8H6.8Z" fill="#6cc01c" stroke="#4f9a12" stroke-width="0.3" />
<path d="M8.2,3.4V8.8" fill="none" stroke="#333" stroke-width="0.7" />
</g>
<g transform="translate(4.30,382.90)">
<path d="M2.3,2.2H9.4V9.5H2.3Z" fill="none" stroke="#333" stroke-width="0.7" />
<path d="M2.9,6.4H5.8V9.0" fill="none" stroke="#777" stroke-width="0.5" />
<circle cx="2.30" cy="2.20" r="1.05" fill="#6cc01c" stroke="#4f9a12" stroke-width="0.3"/>
<circle cx="9.40" cy="2.20" r="1.05" fill="#6cc01c" stroke="#4f9a12" stroke-width="0.3"/>
<circle cx="2.30" cy="9.50" r="1.05" fill="#6cc01c" stroke="#4f9a12" stroke-width="0.3"/>
<circle cx="9.40" cy="9.50" r="1.05" fill="#6cc01c" stroke="#4f9a12" stroke-width="0.3"/>
</g>
<g transform="translate(21.90,382.90)">
<path d="M2.0,4.8L4.2,2.2L6.8,3.2L6.6,6.2L3.6,7.2Z" fill="#5fd000" stroke="#4f9a12" stroke-width="0.4" />
<circle cx="8.00" cy="7.80" r="2.4" fill="#fdfdfd" stroke="#8a8a8a" stroke-width="0.7"/>
</g>
<g transform="translate(39.50,382.90)">
<text x="6.4" y="8.8" font-size="8" font-weight="bold" fill="#111" text-anchor="middle">A</text>
<circle cx="6.40" cy="2.40" r="1.0" fill="#6cc01c" stroke="#4f9a12" stroke-width="0.3"/>
<circle cx="3.50" cy="8.90" r="1.0" fill="#6cc01c" stroke="#4f9a12" stroke-width="0.3"/>
<circle cx="9.40" cy="8.90" r="1.0" fill="#6cc01c" stroke="#4f9a12" stroke-width="0.3"/>
</g>
<g transform="translate(57.10,382.90)">
<path d="M2.3,2.4H7.0V7.0H2.3Z M5.3,4.7H9.4V8.8H5.3Z" fill="none" stroke="#444" stroke-width="0.6" />
<circle cx="5.30" cy="4.70" r="1.0" fill="#6cc01c" stroke="#4f9a12" stroke-width="0.3"/>
<circle cx="9.40" cy="4.70" r="1.0" fill="#6cc01c" stroke="#4f9a12" stroke-width="0.3"/>
<circle cx="5.30" cy="8.80" r="1.0" fill="#6cc01c" stroke="#4f9a12" stroke-width="0.3"/>
<circle cx="9.40" cy="8.80" r="1.0" fill="#6cc01c" stroke="#4f9a12" stroke-width="0.3"/>
</g>
<g transform="translate(74.90,382.90)">
<path d="M2.6,2.4H9.8V9.5H2.6Z" fill="none" stroke="#aaa" stroke-width="0.6" />
<path d="M2.6,3.0L9.2,9.5 M2.6,5.2L6.8,9.5" fill="none" stroke="#777" stroke-width="0.55" />
<path d="M9.8,1.6V3.2 M9.0,2.4H10.6" fill="none" stroke="#777" stroke-width="0.4" />
</g>
<linearGradient id="pg" x1="0" y1="0" x2="0" y2="1"><stop offset="0" stop-color="#f3f3f3"/><stop offset="1" stop-color="#dcdcdc"/></linearGradient>
<path d="M3.8,8.0v0.8 M3.8,9.6v0.8 M3.8,11.2v0.8" stroke="#c9c6c1" stroke-width="0.8"/>
<path d="M10.20,4.00H16.20L18.80,6.60V15.40H10.20Z" fill="url(#pg)" stroke="#c2c2c2" stroke-width="0.5"/>
<path d="M16.20,4.00V6.60H18.80" fill="#e2e2e2" stroke="#c2c2c2" stroke-width="0.4"/>
<circle cx="17.6" cy="13.0" r="2.7" fill="#8ccc34" stroke="#64a81c" stroke-width="0.4"/>
<path d="M17.6,11.5V13.3 M16.400000000000002,12.8L17.6,14.4L18.8,12.8" fill="none" stroke="#b7e37a" stroke-width="0.7"/>
<path d="M27.80,4.00H33.80L36.40,6.60V15.40H27.80Z" fill="url(#pg)" stroke="#c2c2c2" stroke-width="0.5"/>
<path d="M33.80,4.00V6.60H36.40" fill="#e2e2e2" stroke="#c2c2c2" stroke-width="0.4"/>
<circle cx="35.2" cy="13.0" r="2.7" fill="#8ccc34" stroke="#64a81c" stroke-width="0.4"/>
<path d="M35.2,11.5V13.3 M34.0,12.8L35.2,14.4L36.400000000000006,12.8" fill="none" stroke="#b7e37a" stroke-width="0.7"/>
<path d="M45.6,5.2H50.4L51.4,6.4H55.6V14.6H45.6Z" fill="#f0efee" stroke="#bdbab6" stroke-width="0.5"/>
<path d="M47.6,4.6H52.2L53.6,6.0V9.4H47.6Z" fill="#fafafa" stroke="#c4c1bd" stroke-width="0.4"/>
<linearGradient id="fold" x1="0" y1="0" x2="0" y2="1"><stop offset="0" stop-color="#f37a4a"/><stop offset="1" stop-color="#d8400f"/></linearGradient>
<path d="M45.0,9.2H56.2V14.4Q56.2,15.2 55.4,15.2H45.8Q45.0,15.2 45.0,14.4Z" fill="url(#fold)" stroke="#c63c10" stroke-width="0.4"/>
<linearGradient id="drv" x1="0" y1="0" x2="0" y2="1"><stop offset="0" stop-color="#e9e9e9"/><stop offset="1" stop-color="#b4b4b4"/></linearGradient>
<path d="M63.40,3.9H71.80L73.30,13.4V14.9H61.70V13.4Z" fill="url(#drv)" stroke="#9a9a9a" stroke-width="0.4"/>
<rect x="61.70" y="13.3" width="11.6" height="1.7" fill="#5a5a5a"/>
<path d="M65.90,4.4H69.10V7.8H71.30L67.50,11.7L63.70,7.8H65.90Z" fill="#8ccc34" stroke="#64a81c" stroke-width="0.4"/>
<path d="M81.00,3.9H89.40L90.90,13.4V14.9H79.30V13.4Z" fill="url(#drv)" stroke="#9a9a9a" stroke-width="0.4"/>
<rect x="79.30" y="13.3" width="11.6" height="1.7" fill="#5a5a5a"/>
<path d="M81.20,4.0H89.20L89.50,6.0H80.90Z" fill="#f7f7f7"/>
<path d="M81.10,4.0H89.30" stroke="#78c41e" stroke-width="0.7"/>
<path d="M81.90,6.0H88.30L85.10,11.6Z" fill="#8ccc34" stroke="#64a81c" stroke-width="0.4"/>
<path d="M100.00,4.4H106.20V9.2H100.00Z" fill="#fbfbfb" stroke="#9c9c9c" stroke-width="0.45"/>
<path d="M98.80,8.6H107.40L108.60,10.4V14.6H97.60V10.4Z" fill="#d6d6d6" stroke="#8a8a8a" stroke-width="0.45"/>
<rect x="99.00" y="10.2" width="8.2" height="1.4" fill="#2e2e2e"/>
<rect x="98.00" y="13.2" width="10.2" height="1.2" fill="#9a9a9a"/>
<path d="M102.20,6.4H104.20" stroke="#aaa" stroke-width="0.5"/>
<path d="M117.60,4.4H123.80V9.2H117.60Z" fill="#fbfbfb" stroke="#9c9c9c" stroke-width="0.45"/>
<path d="M116.40,8.6H125.00L126.20,10.4V14.6H115.20V10.4Z" fill="#d6d6d6" stroke="#8a8a8a" stroke-width="0.45"/>
<rect x="116.60" y="10.2" width="8.2" height="1.4" fill="#2e2e2e"/>
<rect x="115.60" y="13.2" width="10.2" height="1.2" fill="#9a9a9a"/>
<circle cx="118.40" cy="6.2" r="2.0" fill="#f2f2f2" stroke="#555" stroke-width="0.7"/>
<path d="M133.2,8.0v0.8 M133.2,9.6v0.8 M133.2,11.2v0.8" stroke="#c9c6c1" stroke-width="0.8"/>
<path d="M142.0,5.4V13.2L143.8,11.6L145.0,14.2L146.0,13.8L144.9,11.2L147.2,11.0Z" fill="#f2f2f2" stroke="#444" stroke-width="0.6" stroke-linejoin="round"/>
<line x1="157.00" y1="4.20" x2="157.00" y2="16.40" stroke="#d7d4d0" stroke-width="0.6" />
<line x1="157.60" y1="4.20" x2="157.60" y2="16.40" stroke="#fbfbfa" stroke-width="0.6" />
<path d="M162.2,9.2L167.0,5.2V7.6C171.6,7.6 173.8,10.2 173.4,14.0C172.4,11.8 170.8,10.9 167.0,10.9V13.2Z" fill="#b4b4b4" stroke="#a2a2a2" stroke-width="0.3"/>
<path d="M191.6,9.2L186.8,5.2V7.6C182.2,7.6 180.0,10.2 180.4,14.0C181.4,11.8 183.0,10.9 186.8,10.9V13.2Z" fill="#c2c2c2" stroke="#b0b0b0" stroke-width="0.3"/>
<line x1="197.00" y1="4.20" x2="197.00" y2="16.40" stroke="#d7d4d0" stroke-width="0.6" />
<line x1="197.60" y1="4.20" x2="197.60" y2="16.40" stroke="#fbfbfa" stroke-width="0.6" />
<path d="M206.4,4.2L210.2,11.0 M211.4,4.2L207.6,11.0" stroke="#8c8c8c" stroke-width="1.35" stroke-linecap="round" fill="none"/>
<circle cx="206.5" cy="12.7" r="1.7" fill="none" stroke="#d62a2a" stroke-width="1.4"/><circle cx="211.3" cy="12.7" r="1.7" fill="none" stroke="#d62a2a" stroke-width="1.4"/>
<rect x="221.2" y="4.6" width="7.2" height="7.4" fill="#e0e0e0" stroke="#a8a8a8" stroke-width="0.5"/>
<rect x="224.4" y="7.4" width="7.4" height="7.6" fill="#d4d4d4" stroke="#a0a0a0" stroke-width="0.5"/>
<path d="M225.8,10.8H230.4" stroke="#b4b4b4" stroke-width="0.5"/>
<rect x="239.2" y="4.8" width="7.6" height="9.6" rx="0.8" fill="#b98a4e" stroke="#94693a" stroke-width="0.4"/>
<rect x="241.4" y="4.0" width="3.2" height="1.8" rx="0.5" fill="#8b8b8b"/>
<rect x="242.6" y="7.6" width="7.2" height="7.6" fill="#dedede" stroke="#a4a4a4" stroke-width="0.5"/>
<path d="M246.2,9H248.6V11.4" stroke="#bbb" stroke-width="0.5" fill="none"/>
<path d="M257.2,8.0v0.8 M257.2,9.6v0.8 M257.2,11.2v0.8" stroke="#c9c6c1" stroke-width="0.8"/>
<rect x="260.20" y="2.20" width="16.80" height="15.80" rx="2" ry="2" fill="url(#btnp)" stroke="#bebbb6" stroke-width="0.6" />
<path d="M263.6,6.6H273.8 M263.6,9.4H273.8 M263.6,12.2H273.8 M263.6,15.0H273.8 M265.2,5.0V16.2 M267.9,5.0V16.2 M270.6,5.0V16.2 M273.0,5.0V16.2" stroke="#4c4c4c" stroke-width="0.55" fill="none" transform="translate(0,-0.7)"/>
<rect x="281.20" y="4.90" width="7.80" height="9.40" fill="#fdfdfd" stroke="#555" stroke-width="0.55"/>
<circle cx="286.50" cy="9.13" r="1.90" fill="#f4f4f4" stroke="#222" stroke-width="0.80"/>
<path d="M287.90,10.53l2.20,2.20" stroke="#111" stroke-width="1.30" stroke-linecap="round"/>
<line x1="297.60" y1="4.20" x2="297.60" y2="16.40" stroke="#e4e2de" stroke-width="0.6" />
<path d="M312.2,10.6A3.6,3.6 0 1 1 310.2,6.6" fill="none" stroke="#4a90d9" stroke-width="2.3"/>
<path d="M309.4,4.4H314.2V9.2Z" fill="#4a90d9"/>
<rect x="322.00" y="5.40" width="9.80" height="9.20" rx="1.8" ry="1.8" fill="#e3e2e0" stroke="#b9b6b2" stroke-width="0.6" />
<path d="M325.0,10.9A2,2 0 0 1 326.2,8.2A1.6,1.6 0 0 1 328.6,8.6A1.6,1.6 0 0 1 329.0,10.9Z" fill="none" stroke="#8b8b8b" stroke-width="0.6"/>
<rect x="340.00" y="5.40" width="9.80" height="9.20" rx="1.8" ry="1.8" fill="#e3e2e0" stroke="#b9b6b2" stroke-width="0.6" />
<rect x="342.6" y="8.6" width="4.6" height="2.6" rx="1.0" fill="none" stroke="#8b8b8b" stroke-width="0.6"/>
<rect x="357.80" y="6.00" width="9.20" height="8.60" rx="1.8" ry="1.8" fill="#e3e2e0" stroke="#b9b6b2" stroke-width="0.6" />
<path d="M360.0,9.2V8.0H361.6 M363.4,8.0H365.0V9.2 M365.0,11.4V12.6H363.4 M361.6,12.6H360.0V11.4" fill="none" stroke="#8b8b8b" stroke-width="0.6"/>
<path d="M376.0,5.8L379.6,4.4V6.4H384.6V15.0H376.0Z" fill="#e2e2e2" stroke="#b0b0b0" stroke-width="0.5"/>
<rect x="378.6" y="7.4" width="6.4" height="7.8" fill="#f7f7f7" stroke="#b4b4b4" stroke-width="0.4"/>
<circle cx="381.0" cy="10.8" r="1.7" fill="#efefef" stroke="#777" stroke-width="0.7"/><path d="M382.3,12.1l2.4,2.4" stroke="#666" stroke-width="1.1" stroke-linecap="round"/>
<rect x="393.2" y="5.0" width="6.2" height="9.4" fill="#6fee10" stroke="#4b9a12" stroke-width="0.5"/>
<circle cx="398.6" cy="9.6" r="1.9" fill="#e8f6d8" stroke="#222" stroke-width="0.8"/><path d="M400.0,11.0l2.2,2.4" stroke="#111" stroke-width="1.3" stroke-linecap="round"/>
<rect x="412.0" y="5.6" width="5.6" height="9.0" fill="#fbfbfb" stroke="#9a9a9a" stroke-width="0.5"/>
<circle cx="412.2" cy="12.6" r="2.0" fill="#6fd016" stroke="#4b9a12" stroke-width="0.4"/>
<circle cx="417.0" cy="7.4" r="1.8" fill="#f2f2f2" stroke="#222" stroke-width="0.8"/><path d="M418.4,8.8l2.2,2.2" stroke="#111" stroke-width="1.3" stroke-linecap="round"/>
<path d="M427.8,8.0v0.8 M427.8,9.6v0.8 M427.8,11.2v0.8" stroke="#c9c6c1" stroke-width="0.8"/>
<rect x="432.00" y="4.60" width="62.40" height="11.00" rx="2" ry="2" fill="url(#btn)" stroke="#c4c1bc" stroke-width="0.6" />
<rect x="434.60" y="7.0" width="7.4" height="6.0" fill="#ff00ff" stroke="#555" stroke-width="0.4"/>
<text x="444.30" y="12.60" font-size="6.8" fill="#4f4f4f"  textLength="26.70" lengthAdjust="spacingAndGlyphs">By Layer</text>
<path d="M488.90,9.2L490.00,7.6L491.10,9.2Z M488.90,11.2L490.00,12.8L491.10,11.2Z" fill="#555"/>
<rect x="496.80" y="4.60" width="61.20" height="11.00" rx="2" ry="2" fill="url(#btn)" stroke="#c4c1bc" stroke-width="0.6" />
<path d="M499.20,9.6H507.20" stroke="#333" stroke-width="0.9"/>
<text x="509.20" y="12.60" font-size="6.8" fill="#4f4f4f"  textLength="26.70" lengthAdjust="spacingAndGlyphs">By Layer</text>
<path d="M552.50,9.2L553.60,7.6L554.70,9.2Z M552.50,11.2L553.60,12.8L554.70,11.2Z" fill="#555"/>
<rect x="560.00" y="4.60" width="69.80" height="11.00" rx="2" ry="2" fill="url(#btn)" stroke="#c4c1bc" stroke-width="0.6" />
<path d="M562.40,9.6H570.40" stroke="#999" stroke-width="0.5"/>
<text x="572.30" y="12.60" font-size="6.8" fill="#4f4f4f"  textLength="26.70" lengthAdjust="spacingAndGlyphs">By Layer</text>
<path d="M624.30,9.2L625.40,7.6L626.50,9.2Z M624.30,11.2L625.40,12.8L626.50,11.2Z" fill="#555"/>
<path d="M635.6,8.0v0.8 M635.6,9.6v0.8 M635.6,11.2v0.8" stroke="#c9c6c1" stroke-width="0.8"/>
<path d="M641.8,8.0v0.8 M641.8,9.6v0.8 M641.8,11.2v0.8" stroke="#c9c6c1" stroke-width="0.8"/>
<path d="M658.40,8.57L658.40,10.63L657.00,10.83L656.79,11.35L657.63,12.47L656.17,13.93L655.05,13.09L654.53,13.30L654.33,14.70L652.27,14.70L652.07,13.30L651.55,13.09L650.43,13.93L648.97,12.47L649.81,11.35L649.60,10.83L648.20,10.63L648.20,8.57L649.60,8.37L649.81,7.85L648.97,6.73L650.43,5.27L651.55,6.11L652.07,5.90L652.27,4.50L654.33,4.50L654.53,5.90L655.05,6.11L656.17,5.27L657.63,6.73L656.79,7.85L657.00,8.37Z M655.30,9.60A2.0,2.0 0 1 0 651.30,9.60A2.0,2.0 0 1 0 655.30,9.60Z" fill="#6cc01c" stroke="#4b9412" stroke-width="0.4" fill-rule="evenodd"/>
<path d="M666.2,4.8H672.0L674.2,7.0V14.6H666.2Z" fill="#fdfdfd" stroke="#555" stroke-width="0.55"/>
<path d="M675.93,9.72L675.93,11.08L674.97,11.19L674.83,11.52L675.43,12.28L674.48,13.23L673.72,12.63L673.39,12.77L673.28,13.73L671.92,13.73L671.81,12.77L671.48,12.63L670.72,13.23L669.77,12.28L670.37,11.52L670.23,11.19L669.27,11.08L669.27,9.72L670.23,9.61L670.37,9.28L669.77,8.52L670.72,7.57L671.48,8.17L671.81,8.03L671.92,7.07L673.28,7.07L673.39,8.03L673.72,8.17L674.48,7.57L675.43,8.52L674.83,9.28L674.97,9.61Z M673.80,10.40A1.2,1.2 0 1 0 671.40,10.40A1.2,1.2 0 1 0 673.80,10.40Z" fill="#6cc01c" stroke="#4b9412" stroke-width="0.4" fill-rule="evenodd"/>
<path d="M683.2,8.0v0.8 M683.2,9.6v0.8 M683.2,11.2v0.8" stroke="#c9c6c1" stroke-width="0.8"/>
<rect x="691.40" y="7.40" width="4.84" height="5.83" fill="#fdfdfd" stroke="#555" stroke-width="0.34"/>
<circle cx="694.69" cy="10.02" r="1.18" fill="#f4f4f4" stroke="#222" stroke-width="0.50"/>
<path d="M695.56,10.89l1.36,1.36" stroke="#111" stroke-width="0.81" stroke-linecap="round"/>
<rect x="702.60" y="7.00" width="6.40" height="6.40" rx="1.4" ry="1.4" fill="#d9d7d4" stroke="#a9a6a2" stroke-width="0.5" />
<rect x="712.60" y="7.00" width="6.40" height="6.40" rx="1.4" ry="1.4" fill="#d9d7d4" stroke="#a9a6a2" stroke-width="0.5" />
<rect x="722.60" y="7.00" width="6.40" height="6.40" rx="1.4" ry="1.4" fill="#d9d7d4" stroke="#a9a6a2" stroke-width="0.5" />
<path d="M704.2,11.2H707.4" stroke="#555" stroke-width="0.8"/>
<path d="M714.4,9.0h2.8v2.6h-2.8z M715.6,8.6v1.4" fill="none" stroke="#666" stroke-width="0.5"/>
<rect x="724.4" y="8.8" width="2.8" height="2.8" fill="#666"/>
<g transform="translate(635.30,64.90) scale(0.93)">
<path d="M-3.7,0.3C-2.4,-2.2 1.8,-2.6 3.7,-0.4" fill="none" stroke="#1e1e1e" stroke-width="1.3" stroke-linecap="round"/>
<path d="M-3.0,0.8C-1.6,2.6 1.8,2.6 3.2,0.6" fill="none" stroke="#1e1e1e" stroke-width="0.5" opacity="0.7"/>
<ellipse cx="0.6" cy="0.6" rx="1.9" ry="1.6" fill="#1e1e1e"/>
</g>
<path d="M643.10,64.70V63.50A1.1,1.2 0 0 1 645.30,63.50V64.70" fill="none" stroke="#c2c2c2" stroke-width="0.7"/>
<rect x="642.20" y="64.60" width="4.0" height="3.3" rx="0.4" fill="#c9c9c9"/>
<rect x="653.10" y="60.70" width="3.8" height="3.4" fill="#6fe01a"/>
<rect x="651.00" y="63.00" width="8.0" height="4.4" rx="1.0" fill="#141414"/>
<rect x="652.70" y="64.40" width="4.6" height="1.6" fill="#f4f4f4"/>
<rect x="652.40" y="66.70" width="5.2" height="1.8" fill="#6fe01a"/>
<path d="M663.50,62.70H666.30L667.80,64.20V66.00L666.30,67.50H663.50L662.00,66.00V64.20Z" fill="#9b9b9b"/>
<g transform="translate(635.30,77.20) scale(0.93)">
<path d="M-3.7,0.3C-2.4,-2.2 1.8,-2.6 3.7,-0.4" fill="none" stroke="#1e1e1e" stroke-width="1.3" stroke-linecap="round"/>
<path d="M-3.0,0.8C-1.6,2.6 1.8,2.6 3.2,0.6" fill="none" stroke="#1e1e1e" stroke-width="0.5" opacity="0.7"/>
<ellipse cx="0.6" cy="0.6" rx="1.9" ry="1.6" fill="#1e1e1e"/>
</g>
<path d="M643.10,77.00V75.80A1.1,1.2 0 0 1 645.30,75.80V77.00" fill="none" stroke="#c2c2c2" stroke-width="0.7"/>
<rect x="642.20" y="76.90" width="4.0" height="3.3" rx="0.4" fill="#c9c9c9"/>
<rect x="653.10" y="73.00" width="3.8" height="3.4" fill="#6fe01a"/>
<rect x="651.00" y="75.30" width="8.0" height="4.4" rx="1.0" fill="#141414"/>
<rect x="652.70" y="76.70" width="4.6" height="1.6" fill="#f4f4f4"/>
<rect x="652.40" y="79.00" width="5.2" height="1.8" fill="#6fe01a"/>
<path d="M663.50,75.00H666.30L667.80,76.50V78.30L666.30,79.80H663.50L662.00,78.30V76.50Z" fill="#9b9b9b"/>
<g transform="translate(635.30,89.50) scale(0.93)">
<path d="M-3.7,0.3C-2.4,-2.2 1.8,-2.6 3.7,-0.4" fill="none" stroke="#1e1e1e" stroke-width="1.3" stroke-linecap="round"/>
<path d="M-3.0,0.8C-1.6,2.6 1.8,2.6 3.2,0.6" fill="none" stroke="#1e1e1e" stroke-width="0.5" opacity="0.7"/>
<ellipse cx="0.6" cy="0.6" rx="1.9" ry="1.6" fill="#1e1e1e"/>
</g>
<path d="M643.10,89.30V88.10A1.1,1.2 0 0 1 645.30,88.10V89.30" fill="none" stroke="#c2c2c2" stroke-width="0.7"/>
<rect x="642.20" y="89.20" width="4.0" height="3.3" rx="0.4" fill="#c9c9c9"/>
<rect x="653.10" y="85.30" width="3.8" height="3.4" fill="#6fe01a"/>
<rect x="651.00" y="87.60" width="8.0" height="4.4" rx="1.0" fill="#141414"/>
<rect x="652.70" y="89.00" width="4.6" height="1.6" fill="#f4f4f4"/>
<rect x="652.40" y="91.30" width="5.2" height="1.8" fill="#6fe01a"/>
<path d="M663.50,87.30H666.30L667.80,88.80V90.60L666.30,92.10H663.50L662.00,90.60V88.80Z" fill="#9b9b9b"/>
<g transform="translate(635.30,101.80) scale(0.93)">
<path d="M-3.7,0.3C-2.4,-2.2 1.8,-2.6 3.7,-0.4" fill="none" stroke="#1e1e1e" stroke-width="1.3" stroke-linecap="round"/>
<path d="M-3.0,0.8C-1.6,2.6 1.8,2.6 3.2,0.6" fill="none" stroke="#1e1e1e" stroke-width="0.5" opacity="0.7"/>
<ellipse cx="0.6" cy="0.6" rx="1.9" ry="1.6" fill="#1e1e1e"/>
</g>
<path d="M643.10,101.60V100.40A1.1,1.2 0 0 1 645.30,100.40V101.60" fill="none" stroke="#c2c2c2" stroke-width="0.7"/>
<rect x="642.20" y="101.50" width="4.0" height="3.3" rx="0.4" fill="#c9c9c9"/>
<rect x="653.10" y="97.60" width="3.8" height="3.4" fill="#6fe01a"/>
<rect x="651.00" y="99.90" width="8.0" height="4.4" rx="1.0" fill="#141414"/>
<rect x="652.70" y="101.30" width="4.6" height="1.6" fill="#f4f4f4"/>
<rect x="652.40" y="103.60" width="5.2" height="1.8" fill="#6fe01a"/>
<path d="M663.50,99.60H666.30L667.80,101.10V102.90L666.30,104.40H663.50L662.00,102.90V101.10Z" fill="#9b9b9b"/>
<g transform="translate(635.30,114.10) scale(0.93)">
<path d="M-3.7,0.3C-2.4,-2.2 1.8,-2.6 3.7,-0.4" fill="none" stroke="#1e1e1e" stroke-width="1.3" stroke-linecap="round"/>
<path d="M-3.0,0.8C-1.6,2.6 1.8,2.6 3.2,0.6" fill="none" stroke="#1e1e1e" stroke-width="0.5" opacity="0.7"/>
<ellipse cx="0.6" cy="0.6" rx="1.9" ry="1.6" fill="#1e1e1e"/>
</g>
<path d="M643.10,113.90V112.70A1.1,1.2 0 0 1 645.30,112.70V113.90" fill="none" stroke="#c2c2c2" stroke-width="0.7"/>
<rect x="642.20" y="113.80" width="4.0" height="3.3" rx="0.4" fill="#c9c9c9"/>
<rect x="653.10" y="109.90" width="3.8" height="3.4" fill="#6fe01a"/>
<rect x="651.00" y="112.20" width="8.0" height="4.4" rx="1.0" fill="#141414"/>
<rect x="652.70" y="113.60" width="4.6" height="1.6" fill="#f4f4f4"/>
<rect x="652.40" y="115.90" width="5.2" height="1.8" fill="#6fe01a"/>
<path d="M663.50,111.90H666.30L667.80,113.40V115.20L666.30,116.70H663.50L662.00,115.20V113.40Z" fill="#9b9b9b"/>
<g transform="translate(649.40,52.60) scale(0.9)">
<path d="M-3.7,0.3C-2.4,-2.2 1.8,-2.6 3.7,-0.4" fill="none" stroke="#1e1e1e" stroke-width="1.3" stroke-linecap="round"/>
<path d="M-3.0,0.8C-1.6,2.6 1.8,2.6 3.2,0.6" fill="none" stroke="#1e1e1e" stroke-width="0.5" opacity="0.7"/>
<ellipse cx="0.6" cy="0.6" rx="1.9" ry="1.6" fill="#1e1e1e"/>
</g>
<g transform="translate(674.00,52.60) scale(0.9)">
<path d="M-3.7,0.3C-2.4,-2.2 1.8,-2.6 3.7,-0.4" fill="none" stroke="#b9b9b9" stroke-width="1.3" stroke-linecap="round"/>
<path d="M-3.0,0.8C-1.6,2.6 1.8,2.6 3.2,0.6" fill="none" stroke="#b9b9b9" stroke-width="0.5" opacity="0.7"/>
<ellipse cx="0.6" cy="0.6" rx="1.9" ry="1.6" fill="#b9b9b9"/>
</g>
<path d="M697.2,49.6H699.6V51.4H701.4V53.8H699.6V55.6H697.2V53.8H695.4V51.4H697.2Z" fill="#6fd816" stroke="#57b010" stroke-width="0.3"/>
<rect x="720.2" y="51.5" width="5.8" height="2.3" rx="0.5" fill="#6fd816" stroke="#57b010" stroke-width="0.3"/>
<path d="M745.0,53.2L748.0,49.8L749.6,51.2L746.6,54.6Z" fill="#6fd816" stroke="#4f9a12" stroke-width="0.3"/>
<circle cx="749.8" cy="54.2" r="1.5" fill="#fafafa" stroke="#777" stroke-width="0.4"/>
<text x="13.0" y="410.4" font-size="9.0" font-weight="bold" fill="#111" text-anchor="middle">A</text>
<path d="M16.4,402.2H18.8 M17.6,402.2V410.4 M16.4,410.4H18.8" stroke="#666" stroke-width="0.5" fill="none"/>
<path d="M28.4,402.4H36.4V410.8H30.6L28.4,408.0Z" fill="#6ff00e" stroke="#3f8a10" stroke-width="0.5"/>
<path d="M28.2,401.6v1.6 M36.6,401.6v1.6 M28.2,410v1.4" stroke="#555" stroke-width="0.4"/>
<path d="M45.4,404.4H47.6L48.4,403.2H51.2L52.0,404.4H53.8V410.6H45.4Z" fill="#f4f4f4" stroke="#222" stroke-width="0.7"/>
<circle cx="50.2" cy="407.4" r="1.9" fill="#6fd816" stroke="#222" stroke-width="0.5"/><rect x="51.6" y="402.2" width="2.2" height="1.6" fill="#222"/>
<rect x="64.4" y="402.8" width="7.0" height="4.6" fill="none" stroke="#555" stroke-width="0.55"/>
<circle cx="64.2" cy="408.6" r="2.2" fill="#f4f4f4" stroke="#666" stroke-width="0.55"/>
<circle cx="71.4" cy="408.2" r="1.0" fill="#6cc01c"/><path d="M64.2,408.6H71" stroke="#888" stroke-width="0.4"/>
<circle cx="82.6" cy="402.8" r="1.05" fill="#6cc01c"/><circle cx="87.4" cy="402.8" r="1.05" fill="#6cc01c"/><circle cx="87.8" cy="407.2" r="1.05" fill="#6cc01c"/>
<circle cx="82.8" cy="408.6" r="1.6" fill="#fafafa" stroke="#666" stroke-width="0.5"/><path d="M81.2,410.6H86" stroke="#555" stroke-width="0.6"/>
<path d="M97.4,404.6v0.8 M97.4,406.20000000000005v0.8 M97.4,407.8v0.8" stroke="#c9c6c1" stroke-width="0.8"/>
<rect x="101.60" y="398.70" width="16.20" height="15.20" rx="2" ry="2" fill="url(#btnp)" stroke="#bebbb6" stroke-width="0.6" />
<path d="M105.2,406.4H114.4 M109.8,401.6V411.2" stroke="#8f8f8f" stroke-width="0.6"/>
<rect x="122.85" y="401.30" width="2.1" height="2.0" fill="#5fb414"/>
<rect x="122.85" y="403.90" width="2.1" height="2.0" fill="#5fb414"/>
<rect x="122.85" y="406.50" width="2.1" height="2.0" fill="#5fb414"/>
<rect x="122.85" y="409.10" width="2.1" height="2.0" fill="#5fb414"/>
<rect x="125.85" y="401.30" width="2.1" height="2.0" fill="#5fb414"/>
<rect x="125.85" y="403.90" width="2.1" height="2.0" fill="#5fb414"/>
<rect x="125.85" y="406.50" width="2.1" height="2.0" fill="#5fb414"/>
<rect x="125.85" y="409.10" width="2.1" height="2.0" fill="#5fb414"/>
<rect x="128.85" y="401.30" width="2.1" height="2.0" fill="#5fb414"/>
<rect x="128.85" y="403.90" width="2.1" height="2.0" fill="#5fb414"/>
<rect x="128.85" y="406.50" width="2.1" height="2.0" fill="#5fb414"/>
<rect x="128.85" y="409.10" width="2.1" height="2.0" fill="#5fb414"/>
<rect x="136.50" y="398.70" width="16.20" height="15.20" rx="2" ry="2" fill="url(#btnp)" stroke="#bebbb6" stroke-width="0.6" />
<path d="M140.6,405.2L142.9,402.3C146.6,402.8 149.2,405.2 149.6,408.5 M142.0,404.6C144.6,405.4 146.2,407.6 146.3,411.0" fill="none" stroke="#777" stroke-width="0.6"/>
<circle cx="142.90" cy="402.30" r="1.15" fill="#6cc01c" stroke="#4f9a12" stroke-width="0.3"/>
<circle cx="140.60" cy="405.20" r="1.15" fill="#6cc01c" stroke="#4f9a12" stroke-width="0.3"/>
<circle cx="149.60" cy="408.50" r="1.15" fill="#6cc01c" stroke="#4f9a12" stroke-width="0.3"/>
<circle cx="146.30" cy="411.10" r="1.15" fill="#6cc01c" stroke="#4f9a12" stroke-width="0.3"/>
<path d="M158.0,404.5L160.0,401.6C163.6,402.6 166.6,405.2 167.1,408.3 M162.7,405.5C163.8,407 164.2,408.6 164.2,410.6" fill="none" stroke="#777" stroke-width="0.6"/>
<circle cx="160.00" cy="401.60" r="1.05" fill="#6cc01c" stroke="#4f9a12" stroke-width="0.3"/>
<circle cx="158.00" cy="404.50" r="1.05" fill="#6cc01c" stroke="#4f9a12" stroke-width="0.3"/>
<circle cx="162.70" cy="405.50" r="1.05" fill="#6cc01c" stroke="#4f9a12" stroke-width="0.3"/>
<circle cx="164.80" cy="406.50" r="1.05" fill="#6cc01c" stroke="#4f9a12" stroke-width="0.3"/>
<circle cx="167.10" cy="408.30" r="1.05" fill="#6cc01c" stroke="#4f9a12" stroke-width="0.3"/>
<circle cx="164.20" cy="410.60" r="1.05" fill="#6cc01c" stroke="#4f9a12" stroke-width="0.3"/>
<path d="M176.3,405.9C179.4,406.2 181.2,408.2 181.5,411.2 M179.6,402.0L184.8,407.0" fill="none" stroke="#777" stroke-width="0.6"/>
<circle cx="182.00" cy="404.30" r="1.1" fill="#6cc01c" stroke="#4f9a12" stroke-width="0.3"/>
<circle cx="176.90" cy="410.00" r="1.1" fill="#6cc01c" stroke="#4f9a12" stroke-width="0.3"/>
<path d="M193.4,404.6L203.0,408.0 M198.0,401.4L198.6,411.6" fill="none" stroke="#777" stroke-width="0.6"/>
<circle cx="199.30" cy="404.30" r="1.1" fill="#6cc01c" stroke="#4f9a12" stroke-width="0.3"/>
<circle cx="197.20" cy="406.50" r="1.1" fill="#6cc01c" stroke="#4f9a12" stroke-width="0.3"/>
<path d="M211.6,406.2C215.0,405.6 218.6,403.6 220.6,401.4 M213.4,402.2C216.2,404.8 219.4,406.8 221.8,407.4" fill="none" stroke="#777" stroke-width="0.6"/>
<circle cx="215.90" cy="403.30" r="1.05" fill="#6cc01c" stroke="#4f9a12" stroke-width="0.3"/>
<circle cx="219.60" cy="403.30" r="1.05" fill="#6cc01c" stroke="#4f9a12" stroke-width="0.3"/>
<circle cx="213.30" cy="408.50" r="1.05" fill="#6cc01c" stroke="#4f9a12" stroke-width="0.3"/>
<circle cx="216.80" cy="409.00" r="1.05" fill="#6cc01c" stroke="#4f9a12" stroke-width="0.3"/>
<path d="M230.0,402.6L237.4,409.8 M237.4,402.6L230.0,409.8" fill="none" stroke="#888" stroke-width="0.65"/>
<rect x="232.5" y="405.0" width="2.4" height="2.3" fill="#5fb414"/>
<line x1="244.80" y1="399.60" x2="244.80" y2="413.40" stroke="#dddad6" stroke-width="0.6" />
<rect x="252.20" y="401.40" width="9.60" height="3.40" fill="#7d7d7d"/>
<rect x="252.20" y="407.80" width="9.60" height="3.40" fill="#7d7d7d"/>
<path d="M252.2,406.3H261.8" stroke="#58b010" stroke-width="1.1"/>
<circle cx="257" cy="406.3" r="0.9" fill="#6cc01c"/>
<rect x="269.60" y="401.40" width="3.40" height="9.80" fill="#7d7d7d"/>
<rect x="275.80" y="401.40" width="3.40" height="9.80" fill="#7d7d7d"/>
<path d="M274.4,401.4V411.2" stroke="#58b010" stroke-width="1.1"/>
<circle cx="274.4" cy="406.3" r="0.9" fill="#6cc01c"/>
<rect x="287.00" y="401.40" width="3.60" height="3.60" fill="#7d7d7d"/>
<rect x="293.60" y="401.40" width="3.60" height="3.60" fill="#7d7d7d"/>
<rect x="287.00" y="407.60" width="3.60" height="3.60" fill="#7d7d7d"/>
<rect x="293.60" y="407.60" width="3.60" height="3.60" fill="#7d7d7d"/>
<path d="M287,406.3H297.2 M292.1,401.4V411.2" stroke="#58b010" stroke-width="0.9"/>
<line x1="304.60" y1="399.60" x2="304.60" y2="413.40" stroke="#dddad6" stroke-width="0.6" />
<circle cx="314.2" cy="407.6" r="1.9" fill="#f4f4f4" stroke="#222" stroke-width="0.7"/><path d="M315.4,406.2L317.6,403.4" stroke="#222" stroke-width="0.6"/>
<circle cx="317.20" cy="403.40" r="1.0" fill="#6cc01c" stroke="#4f9a12" stroke-width="0.3"/>
<rect x="327.6" y="403.4" width="5.2" height="4.0" rx="0.5" fill="#111"/><path d="M328.8,403.4V402.4A1.4,1.4 0 0 1 331.6,402.4V403.4" fill="none" stroke="#111" stroke-width="0.8"/>
<circle cx="334.8" cy="408.8" r="1.9" fill="#f4f4f4" stroke="#222" stroke-width="0.7"/><path d="M335.8,407.4L337.8,405.0" stroke="#222" stroke-width="0.6"/>
<circle cx="337.40" cy="405.00" r="1.0" fill="#6cc01c" stroke="#4f9a12" stroke-width="0.3"/>
<path d="M345.2,404.6v0.8 M345.2,406.20000000000005v0.8 M345.2,407.8v0.8" stroke="#c9c6c1" stroke-width="0.8"/>
<path d="M262.0,421.4A1.6,1.6 0 0 1 265.2,421.4V423" fill="none" stroke="#888" stroke-width="0.5"/>
<rect x="261.8" y="422.2" width="6.4" height="7.6" rx="2.6" fill="#fbfbfb" stroke="#777" stroke-width="0.6"/>
<path d="M262.0,424.6H268.0 M265.0,422.2V424.6" stroke="#777" stroke-width="0.4"/>
<path d="M262.2,424.4V423.6Q262.2,422.5 263.4,422.4H264.8V424.4Z" fill="#5fc414"/>
<rect x="-6.00" y="-6.00" width="780.00" height="6.85" fill="#646464" />
<rect x="-6.00" y="-6.00" width="6.90" height="444.00" fill="#6c6c6c" />
<rect x="766.80" y="-6.00" width="8.00" height="444.00" fill="#5a5a5a" />
<rect x="-6.00" y="430.80" width="780.00" height="8.00" fill="#5e5e5e" />
</g>
</svg></body></html>
